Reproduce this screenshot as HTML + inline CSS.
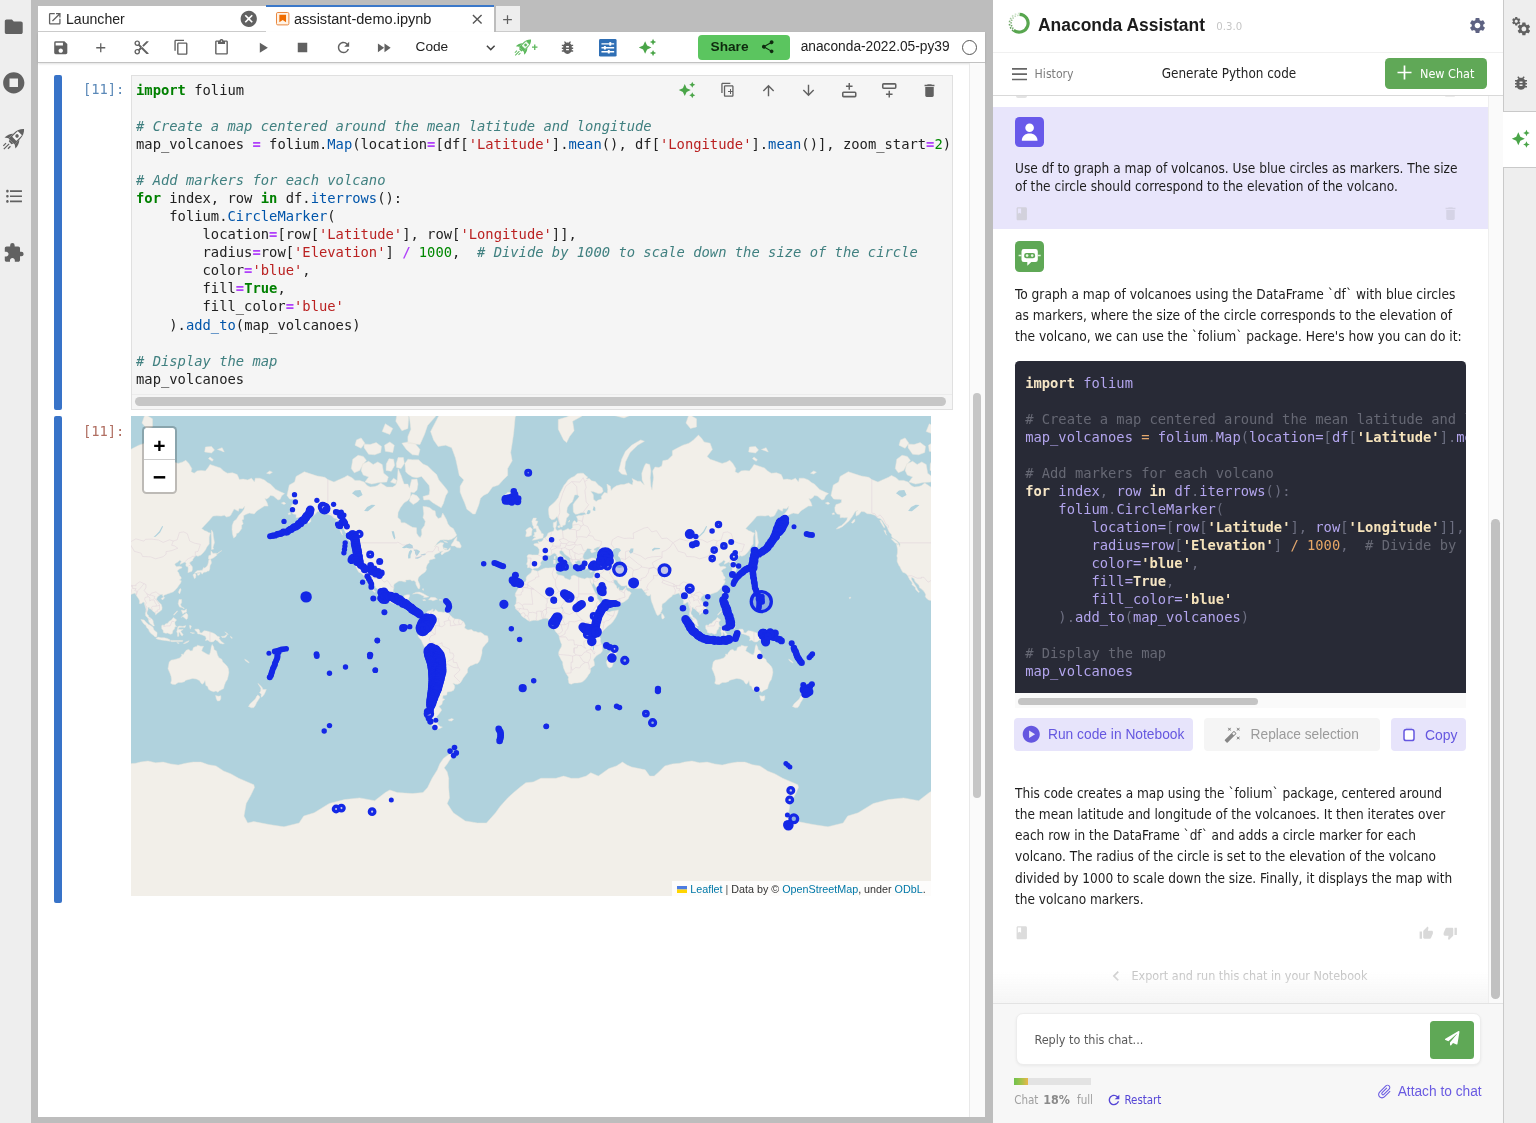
<!DOCTYPE html><html lang="en"><head><meta charset="utf-8"><title>assistant-demo.ipynb - JupyterLab</title><style>*{box-sizing:border-box;margin:0;padding:0}
html,body{width:1536px;height:1123px;overflow:hidden}
body{will-change:transform;transform:translateZ(0);position:relative;background:#bdbdbd;font-family:"Liberation Sans",Arial,sans-serif;color:#222;-webkit-font-smoothing:antialiased}
.ic{position:absolute;display:block;overflow:visible}
.ui{position:absolute;white-space:pre;line-height:18px;font-family:"Liberation Sans",Arial,sans-serif}
.tx{position:absolute;white-space:pre;font-family:"DejaVu Sans Condensed","Liberation Sans",sans-serif}
/* left sidebar */
#lsb{position:absolute;left:0;top:0;width:30.8px;height:1123px;background:#eeeeee}
/* tab bar */
#tabbar{position:absolute;left:31px;top:0;width:962px;height:32px}
#tabbar .ic,#tabbar .tabl{margin-left:-31px}
.tab{position:absolute;top:6px;height:26px;background:#fff;margin-left:-31px;border-bottom:1.2px solid #cdcdcd}
.tab.act{top:5px;height:27.5px;border-top:2px solid #3b78c9;border-bottom:none}
.tab.plus{background:#eee}
.tabl{position:absolute;top:10px;line-height:18px;font-size:14.1px;color:#222;white-space:pre}
/* notebook */
#nb{position:absolute;left:0;top:0;width:0;height:0}
#nb:before{content:"";position:absolute;left:38.3px;top:32px;width:946.7px;height:1085px;background:#fff}
#toolbar{position:absolute;left:38.3px;top:32px;width:946.7px;height:30.8px;background:#fff;border-bottom:1px solid #c2c2c2;box-shadow:0 1px 2px rgba(0,0,0,.12)}
#share{position:absolute;left:698px;top:34.6px;width:92px;height:25px;background:#5bc55f;border-radius:4px}
.collapser{position:absolute;left:54.4px;width:8.1px;background:#3873c8;border-radius:2px}
.prompt{position:absolute;font-family:"DejaVu Sans Mono","Liberation Mono",monospace;font-size:13.78px;line-height:18.1px;white-space:pre}
#editor{position:absolute;left:130.6px;top:74.9px;width:822px;height:334.7px;background:#f5f5f5;border:1px solid #e0e0e0}
.code{position:absolute;font-family:"DejaVu Sans Mono","Liberation Mono",monospace;font-size:13.82px;line-height:18.07px;white-space:pre;color:#212121}
.code i{font-style:italic;color:#408080}
.code b{font-weight:bold;color:#008000}
.code .o{color:#b040fa;font-weight:bold}
.code .s{color:#ba2121}
.code .n{color:#080}
.code .p{color:#0055aa}
.hthumb{position:absolute;background:#c6c6c6;border-radius:5px}
#vtrack{position:absolute;left:969.3px;top:63px;width:15.7px;height:1054px;background:#fafafa;border-left:1px solid #e9e9e9}
#vthumb{position:absolute;left:973.2px;top:392.6px;width:8.2px;height:405.7px;background:#c6c6c6;border-radius:4.1px}
/* map */
#map{position:absolute;left:130.6px;top:416px;width:800.6px;height:480px;background:#b2d1dc;overflow:hidden}
#map svg.world{position:absolute;left:0;top:0}
#zoomctl{position:absolute;left:11.4px;top:10.3px;width:34.8px;height:67.4px;border:2px solid rgba(0,0,0,.22);border-radius:4.5px;background:#fff;background-clip:padding-box}
.zb{height:31.2px;text-align:center;font:bold 21px/35px "Liberation Sans",Arial,sans-serif;color:#000}
.zb.zm{border-top:1px solid #ccc;line-height:35px;font-size:23px}
#attr{position:absolute;right:0;bottom:0;height:15.5px;padding:0 5.5px 0 5px;background:rgba(255,255,255,.8);font-size:10.75px;line-height:16.6px;color:#333;white-space:pre}
#attr .lk{color:#0078a8}
#attr .sep{color:#555}
/* right sidebar */
#rsb{position:absolute;left:1503px;top:0;width:33px;height:1123px;background:#eeeeee;border-left:1px solid #c9c9c9}
#rsbact{position:absolute;left:-1px;top:111.4px;width:34px;height:56.4px;background:#fff;border-top:1px solid #c9c9c9;border-bottom:1px solid #c9c9c9}
/* assistant panel */
#ap{position:absolute;left:993px;top:0;width:510px;height:1123px;background:#fff}
.hr{position:absolute;left:993px;width:510px;height:1px}
#newchat{position:absolute;left:1385.3px;top:58.4px;width:101.7px;height:30.6px;background:#60a857;border-radius:4.5px}
#aptrack{position:absolute;left:1487.7px;top:95.7px;width:15.3px;height:907px;background:#fafafa;border-left:1px solid #eeeeee}
#apthumb{position:absolute;left:1491.3px;top:519.3px;width:8.6px;height:479.6px;background:#c1c1c1;border-radius:4.3px}
#umsg{position:absolute;left:993px;top:106.9px;width:494.7px;height:122.4px;background:#e8e5fb}
.av{position:absolute;width:29.8px;height:29.8px;border-radius:4.5px}
.msg{color:#1d1d1d}
#dblock{position:absolute;left:1014.8px;top:361.1px;width:451.6px;height:331.7px;background:#282a36;border-radius:4.5px 4.5px 0 0;overflow:hidden}
.dcode{position:absolute;left:10.4px;top:12.5px;font-family:"DejaVu Sans Mono","Liberation Mono",monospace;font-size:13.78px;line-height:18.05px;white-space:pre;color:#b3a5ee}
.dcode .dc{color:#666874}
.dcode .ds{color:#f6e3bb;font-weight:bold}
.dcode .dk{color:#f6e6c6;font-weight:bold}
.dcode .dn{color:#e7a766}
.dcode .do{color:#e3a86e}
.dcode .dp{color:#6c6e80}
#dscroll{position:absolute;left:1014.8px;top:692.8px;width:451.6px;height:15.4px;background:#fafafa}
#dscroll div{position:absolute;left:2.9px;top:5px;width:240px;height:7.4px;border-radius:3.7px;background:#c4c4c4}
.btn{position:absolute;top:718.4px;height:32.7px;background:#e7e4fb;border-radius:4px}
.btn.dis{background:#f5f5f5}
#apbottom{position:absolute;left:993px;top:1002.6px;width:510px;height:120.4px;background:#f7f7f7;border-top:1px solid #e3e3e3}
#inputbox{position:absolute;left:1015.6px;top:1013.1px;width:465px;height:52px;background:#fff;border:1px solid #ededed;border-radius:7px;box-shadow:0 1px 3px rgba(0,0,0,.06)}
#send{position:absolute;left:1429.7px;top:1020.6px;width:44.5px;height:38px;background:#5fa856;border-radius:3.5px}
#prog{position:absolute;left:1014.2px;top:1078.2px;width:76.4px;height:6.4px;background:#e3e3e3}
#prog div{width:14.2px;height:100%;background:linear-gradient(90deg,#6fc24c,#a8c24a 55%,#e9b64a)}
#apfade{position:absolute;left:993px;top:972px;width:494.7px;height:30.6px;background:linear-gradient(180deg,rgba(244,244,244,0),rgba(244,244,244,.9))}
</style></head><body><div id="lsb"><svg class="ic" style="left:3.25px;top:16.25px;width:21.50px;height:21.50px;fill:#616161;" viewBox="0 0 24 24"><path d="M10 4H4c-1.1 0-1.99.9-1.99 2L2 18c0 1.1.9 2 2 2h16c1.1 0 2-.9 2-2V8c0-1.1-.9-2-2-2h-8l-2-2z"/></svg><svg class="ic" style="left:1.05px;top:70.25px;width:25.50px;height:25.50px;fill:#616161;" viewBox="0 0 24 24"><path d="M12 2C6.48 2 2 6.48 2 12s4.48 10 10 10 10-4.48 10-10S17.52 2 12 2zm4 14H8V8h8v8z"/></svg><svg class="ic" style="left:0;top:0;width:1px;height:1px" viewBox="0 0 1 1"><g transform="translate(14.00 139.00) rotate(45) scale(1.000)"><path fill="#616161" d="M0-14.200C2.600-12 4.300-8.500 4.300-4V3.500H-4.300V-4C-4.300-8.500-2.600-12 0-14.200Z"/><path fill="#616161" d="M-4.300-3.200C-6.600-1-7.700 2-7.700 5.700L-4.300 3.300ZM4.300-3.200C6.600-1 7.700 2 7.700 5.700L4.300 3.300Z"/><rect x="-3" y="-8.300" width="6" height="8" rx=".6" fill="#f4f4f4"/><circle cx="0" cy="-4.300" r="1.750" fill="#616161"/><path fill="#616161" d="M-2.700 3.500H2.700L1.900 5.400H-1.900Z"/><path stroke="#616161" stroke-width="1.250" fill="none" d="M-2.700 8.600V12.400M0 6.900V14.400M2.600 7.600V11.100"/></g></svg><svg class="ic" style="left:3.75px;top:185.75px;width:20.50px;height:20.50px;fill:#616161;" viewBox="0 0 24 24"><path d="M4 10.5c-.83 0-1.5.67-1.5 1.5s.67 1.5 1.5 1.5 1.5-.67 1.5-1.5-.67-1.5-1.5-1.5zm0-6c-.83 0-1.5.67-1.5 1.5S3.17 7.5 4 7.5 5.5 6.83 5.5 6 4.83 4.5 4 4.5zm0 12c-.83 0-1.5.68-1.5 1.5s.68 1.5 1.5 1.5 1.5-.68 1.5-1.5-.67-1.5-1.5-1.5zM7 19h14v-2H7v2zm0-6h14v-2H7v2zm0-8v2h14V5H7z"/></svg><svg class="ic" style="left:3.25px;top:242.25px;width:21.50px;height:21.50px;fill:#616161;" viewBox="0 0 24 24"><path d="M20.5 11H19V7c0-1.1-.9-2-2-2h-4V3.5a2.5 2.5 0 0 0-5 0V5H4c-1.1 0-1.99.9-1.99 2v3.8H3.5c1.49 0 2.7 1.21 2.7 2.7s-1.21 2.7-2.7 2.7H2V20c0 1.1.9 2 2 2h3.8v-1.5c0-1.49 1.21-2.7 2.7-2.7 1.49 0 2.7 1.21 2.7 2.7V22H17c1.1 0 2-.9 2-2v-4h1.5a2.5 2.5 0 0 0 0-5z"/></svg></div><div id="tabbar"><div class="tab" style="left:38.3px;width:228px"></div><svg class="ic" style="left:46.70px;top:10.90px;width:15.50px;height:15.50px;fill:#616161;" viewBox="0 0 24 24"><path d="M19 19H5V5h7V3H5a2 2 0 0 0-2 2v14a2 2 0 0 0 2 2h14c1.1 0 2-.9 2-2v-7h-2v7zM14 3v2h3.59l-9.83 9.83 1.41 1.41L19 6.41V10h2V3h-7z"/></svg><span class="tabl" style="left:66px">Launcher</span><svg class="ic" style="left:238.75px;top:9.25px;width:19.50px;height:19.50px;fill:#616161;" viewBox="0 0 24 24"><path d="M12 2C6.47 2 2 6.47 2 12s4.47 10 10 10 10-4.47 10-10S17.53 2 12 2zm5 13.59L15.59 17 12 13.41 8.41 17 7 15.59 10.59 12 7 8.41 8.41 7 12 10.59 15.59 7 17 8.41 13.41 12 17 15.59z"/></svg><div class="tab act" style="left:266.3px;width:228.2px"></div><svg class="ic" style="left:276px;top:12.3px;width:13.4px;height:13.4px" viewBox="0 0 22 22"><rect x="0.8" y="0.8" width="20.400" height="20.400" rx="2.200" fill="#fff3e6" stroke="#e8843a" stroke-width="1.600"/><path d="M5.500 4.500h11v12.500l-5.500-4-5.500 4z" fill="#ef6c00"/></svg><span class="tabl" style="left:294px;font-size:14.55px">assistant-demo.ipynb</span><svg class="ic" style="left:468.75px;top:10.75px;width:16.50px;height:16.50px;fill:#555;" viewBox="0 0 24 24"><path d="M19 6.41 17.59 5 12 10.59 6.41 5 5 6.41 10.59 12 5 17.59 6.41 19 12 13.41 17.59 19 19 17.59 13.41 12z"/></svg><div class="tab plus" style="left:495.5px;width:24.5px"></div><svg class="ic" style="left:500.10px;top:11.50px;width:15.00px;height:15.00px;fill:#616161;" viewBox="0 0 24 24"><path d="M19 13h-6v6h-2v-6H5v-2h6V5h2v6h6v2z"/></svg></div><div id="nb"><div id="toolbar"></div><svg class="ic" style="left:51.75px;top:38.75px;width:17.50px;height:17.50px;fill:#616161;" viewBox="0 0 24 24"><path d="M17 3H5a2 2 0 0 0-2 2v14a2 2 0 0 0 2 2h14c1.1 0 2-.9 2-2V7l-4-4zm-5 16c-1.66 0-3-1.34-3-3s1.34-3 3-3 3 1.34 3 3-1.34 3-3 3zm3-10H5V5h10v4z"/></svg><svg class="ic" style="left:92.95px;top:39.75px;width:15.50px;height:15.50px;fill:#616161;" viewBox="0 0 24 24"><path d="M19 13h-6v6h-2v-6H5v-2h6V5h2v6h6v2z"/></svg><svg class="ic" style="left:132.50px;top:39.00px;width:17.00px;height:17.00px;fill:#616161;" viewBox="0 0 24 24"><path d="M9.64 7.64c.23-.5.36-1.05.36-1.64 0-2.21-1.79-4-4-4S2 3.79 2 6s1.79 4 4 4c.59 0 1.14-.13 1.64-.36L10 12l-2.36 2.36C7.14 14.13 6.59 14 6 14c-2.21 0-4 1.79-4 4s1.79 4 4 4 4-1.79 4-4c0-.59-.13-1.14-.36-1.64L12 14l7 7h3v-1L9.64 7.64zM6 8c-1.1 0-2-.89-2-2s.9-2 2-2 2 .89 2 2-.9 2-2 2zm0 12c-1.1 0-2-.89-2-2s.9-2 2-2 2 .89 2 2-.9 2-2 2zm6-7.5c-.28 0-.5-.22-.5-.5s.22-.5.5-.5.5.22.5.5-.22.5-.5.5zM19 3l-6 6 2 2 7-7V3z"/></svg><svg class="ic" style="left:172.75px;top:39.25px;width:16.50px;height:16.50px;fill:#616161;" viewBox="0 0 24 24"><path d="M16 1H4c-1.1 0-2 .9-2 2v14h2V3h12V1zm3 4H8c-1.1 0-2 .9-2 2v14c0 1.1.9 2 2 2h11c1.1 0 2-.9 2-2V7c0-1.1-.9-2-2-2zm0 16H8V7h11v14z"/></svg><svg class="ic" style="left:213.00px;top:38.50px;width:17.00px;height:17.00px;fill:#616161;" viewBox="0 0 24 24"><path d="M19 2h-4.18C14.4.84 13.3 0 12 0c-1.3 0-2.4.84-2.82 2H5c-1.1 0-2 .9-2 2v16c0 1.1.9 2 2 2h14c1.1 0 2-.9 2-2V4c0-1.1-.9-2-2-2zm-7 0c.55 0 1 .45 1 1s-.45 1-1 1-1-.45-1-1 .45-1 1-1zm7 18H5V4h2v3h10V4h2v16z"/></svg><svg class="ic" style="left:254.25px;top:38.75px;width:17.50px;height:17.50px;fill:#616161;" viewBox="0 0 24 24"><path d="M8 5v14l11-7z"/></svg><svg class="ic" style="left:293.30px;top:38.00px;width:19.00px;height:19.00px;fill:#616161;" viewBox="0 0 24 24"><path d="M6 6h12v12H6z"/></svg><svg class="ic" style="left:334.80px;top:38.80px;width:17.00px;height:17.00px;fill:#616161;" viewBox="0 0 24 24"><path d="M17.65 6.35A7.958 7.958 0 0 0 12 4c-4.42 0-7.99 3.58-7.99 8s3.57 8 7.99 8c3.73 0 6.84-2.55 7.73-6h-2.08A5.99 5.99 0 0 1 12 18c-3.31 0-6-2.69-6-6s2.69-6 6-6c1.66 0 3.14.69 4.22 1.78L13 11h7V4l-2.35 2.35z"/></svg><svg class="ic" style="left:375.25px;top:38.75px;width:17.50px;height:17.50px;fill:#616161;" viewBox="0 0 24 24"><path d="m4 18 8.5-6L4 6v12zm9-12v12l8.5-6L13 6z"/></svg><span class="ui" style="left:415.5px;top:38px;font-size:13.7px;color:#222">Code</span><svg class="ic" style="left:481.75px;top:38.75px;width:17.50px;height:17.50px;fill:#444;" viewBox="0 0 24 24"><path d="M16.59 8.59 12 13.17 7.41 8.59 6 10l6 6 6-6z"/></svg><svg class="ic" style="left:0;top:0;width:1px;height:1px" viewBox="0 0 1 1"><g transform="translate(523.20 47.40) rotate(45) scale(0.780)"><path fill="#5cb85c" d="M0-14.200C2.600-12 4.300-8.500 4.300-4V3.500H-4.300V-4C-4.300-8.500-2.600-12 0-14.200Z"/><path fill="#5cb85c" d="M-4.300-3.200C-6.600-1-7.700 2-7.700 5.700L-4.300 3.300ZM4.300-3.200C6.600-1 7.700 2 7.700 5.700L4.300 3.300Z"/><rect x="-3" y="-8.300" width="6" height="8" rx=".6" fill="#eaf7ea"/><circle cx="0" cy="-4.300" r="1.750" fill="#5cb85c"/><path fill="#5cb85c" d="M-2.700 3.500H2.700L1.900 5.400H-1.900Z"/><path stroke="#5cb85c" stroke-width="1.250" fill="none" d="M-2.700 8.600V12.400M0 6.900V14.400M2.600 7.600V11.100"/></g><path fill="#5cb85c" d="M534.10 44.40h1.300v2.100h2.100v1.300h-2.100v2.100h-1.300v-2.100h-2.100v-1.300h2.100z"/></svg><svg class="ic" style="left:558.50px;top:39.00px;width:17.00px;height:17.00px;fill:#616161;" viewBox="0 0 24 24"><path d="M20 8h-2.81a5.985 5.985 0 0 0-1.82-1.96L17 4.41 15.59 3l-2.17 2.17C12.96 5.06 12.49 5 12 5c-.49 0-.96.06-1.41.17L8.41 3 7 4.41l1.62 1.63C7.88 6.55 7.26 7.22 6.81 8H4v2h2.09c-.05.33-.09.66-.09 1v1H4v2h2v1c0 .34.04.67.09 1H4v2h2.81c1.04 1.79 2.97 3 5.19 3s4.15-1.21 5.19-3H20v-2h-2.09c.05-.33.09-.66.09-1v-1h2v-2h-2v-1c0-.34-.04-.67-.09-1H20V8zm-6 8h-4v-2h4v2zm0-4h-4v-2h4v2z"/></svg><svg class="ic" style="left:598.6px;top:39px;width:17.6px;height:17.6px" viewBox="0 0 18 18"><rect width="18" height="18" rx="1.500" fill="#2f6fb5"/><g stroke="#fff" stroke-width="1.500"><path d="M2.500 5h13M2.500 9h13M2.500 13h13"/></g><g fill="#fff"><rect x="10.500" y="3.200" width="2" height="3.600"/><rect x="5" y="7.200" width="2" height="3.600"/><rect x="9" y="11.200" width="2" height="3.600"/></g></svg><svg class="ic" style="left:638.00px;top:37.80px;width:19.00px;height:19.00px;fill:#4aa548;" viewBox="0 0 24 24"><path d="m19 9 1.25-2.75L23 5l-2.75-1.25L19 1l-1.25 2.75L15 5l2.75 1.25L19 9zm-7.5.5L9 4 6.5 9.5 1 12l5.5 2.5L9 20l2.5-5.5L17 12l-5.5-2.5zM19 15l-1.25 2.75L15 19l2.75 1.25L19 23l1.25-2.75L23 19l-2.75-1.25L19 15z"/></svg><div id="share"></div><span class="ui" style="left:710.5px;top:38px;font-size:13.7px;font-weight:bold;color:#0e2a0e">Share</span><svg class="ic" style="left:759.75px;top:39.25px;width:15.50px;height:15.50px;fill:#0e2a0e;" viewBox="0 0 24 24"><path d="M18 16.08c-.76 0-1.44.3-1.96.77L8.91 12.7c.05-.23.09-.46.09-.7s-.04-.47-.09-.7l7.05-4.11c.54.5 1.25.81 2.04.81 1.66 0 3-1.34 3-3s-1.34-3-3-3-3 1.34-3 3c0 .24.04.47.09.7L8.04 9.81C7.5 9.31 6.79 9 6 9c-1.66 0-3 1.34-3 3s1.34 3 3 3c.79 0 1.5-.31 2.04-.81l7.12 4.16c-.05.21-.08.43-.08.65 0 1.61 1.31 2.92 2.92 2.92 1.61 0 2.92-1.31 2.92-2.92s-1.31-2.92-2.92-2.92z"/></svg><span class="ui" style="left:800.7px;top:38px;font-size:13.74px;color:#222">anaconda-2022.05-py39</span><div style="position:absolute;left:962px;top:39.6px;width:15.2px;height:15.2px;border:1.2px solid #555;border-radius:50%"></div><div class="collapser" style="top:74.5px;height:335.5px"></div><span class="prompt" style="left:82.9px;top:80.4px;color:#5b89b8">[11]:</span><div id="editor"></div><pre class="code" id="code1" style="left:136px;top:80.7px"><b>import</b> folium

<i># Create a map centered around the mean latitude and longitude</i>
map_volcanoes <span class="o">=</span> folium.<span class="p">Map</span>(location<span class="o">=</span>[df[<span class="s">'Latitude'</span>].<span class="p">mean</span>(), df[<span class="s">'Longitude'</span>].<span class="p">mean</span>()], zoom_start<span class="o">=</span><span class="n">2</span>)

<i># Add markers for each volcano</i>
<b>for</b> index, row <b>in</b> df.<span class="p">iterrows</span>():
    folium.<span class="p">CircleMarker</span>(
        location<span class="o">=</span>[row[<span class="s">'Latitude'</span>], row[<span class="s">'Longitude'</span>]],
        radius<span class="o">=</span>row[<span class="s">'Elevation'</span>] <span class="o">/</span> <span class="n">1000</span>,  <i># Divide by 1000 to scale down the size of the circle</i>
        color<span class="o">=</span><span class="s">'blue'</span>,
        fill<span class="o">=</span><b>True</b>,
        fill_color<span class="o">=</span><span class="s">'blue'</span>
    ).<span class="p">add_to</span>(map_volcanoes)

<i># Display the map</i>
map_volcanoes</pre><svg class="ic" style="left:678.30px;top:81.00px;width:18.00px;height:18.00px;fill:#4aa548;" viewBox="0 0 24 24"><path d="m19 9 1.25-2.75L23 5l-2.75-1.25L19 1l-1.25 2.75L15 5l2.75 1.25L19 9zm-7.5.5L9 4 6.5 9.5 1 12l5.5 2.5L9 20l2.5-5.5L17 12l-5.5-2.5zM19 15l-1.25 2.75L15 19l2.75 1.25L19 23l1.25-2.75L23 19l-2.75-1.25L19 15z"/></svg><svg class="ic" style="left:719.75px;top:82.25px;width:15.50px;height:15.50px;fill:#616161;" viewBox="0 0 24 24"><path d="M16 1H4c-1.1 0-2 .9-2 2v14h2V3h12V1zm3 4H8c-1.1 0-2 .9-2 2v14c0 1.1.9 2 2 2h11c1.1 0 2-.9 2-2V7c0-1.1-.9-2-2-2zm0 16H8V7h11v14z"/></svg><svg class="ic" style="left:726.6px;top:88.3px;width:7px;height:7px" viewBox="0 0 7 7"><path d="M3 1h1v2h2v1H4v2H3V4H1V3h2z" fill="#616161"/></svg><svg class="ic" style="left:759.50px;top:81.50px;width:17.00px;height:17.00px;fill:#616161;" viewBox="0 0 24 24"><path d="m4 12 1.41 1.41L11 7.83V20h2V7.83l5.58 5.59L20 12l-8-8-8 8z"/></svg><svg class="ic" style="left:799.50px;top:81.50px;width:17.00px;height:17.00px;fill:#616161;" viewBox="0 0 24 24"><path d="m20 12-1.41-1.41L13 16.17V4h-2v12.17l-5.58-5.59L4 12l8 8 8-8z"/></svg><svg class="ic" style="left:840.5px;top:81.5px;width:16.5px;height:16.5px" viewBox="0 0 16 16"><path d="M7.300 1h1.400v2.500h2.500v1.400H8.700v2.500H7.300V4.900H4.800V3.500h2.500z" fill="#616161"/><rect x="1.700" y="10" width="12.600" height="4.200" rx="0.800" fill="none" stroke="#616161" stroke-width="1.500"/></svg><svg class="ic" style="left:880.5px;top:82px;width:16.5px;height:16.5px" viewBox="0 0 16 16"><path d="M7.300 8.600h1.400v2.500h2.500v1.400H8.700V15H7.300v-2.500H4.800v-1.400h2.500z" fill="#616161"/><rect x="1.700" y="1.800" width="12.600" height="4.200" rx="0.800" fill="none" stroke="#616161" stroke-width="1.500"/></svg><svg class="ic" style="left:920.80px;top:81.50px;width:17.00px;height:17.00px;fill:#616161;" viewBox="0 0 24 24"><path d="M6 19c0 1.1.9 2 2 2h8c1.1 0 2-.9 2-2V7H6v12zM19 4h-3.5l-1-1h-5l-1 1H5v2h14V4z"/></svg><div style="position:absolute;left:131.6px;top:393.6px;width:820px;height:1px;background:#ececec"></div><div class="hthumb" style="left:134.8px;top:397.4px;width:811px;height:8.4px"></div><div class="collapser" style="top:416px;height:487px"></div><span class="prompt" style="left:82.9px;top:422.1px;color:#b06e61">[11]:</span><div id="map"><svg class="world" width="800.6" height="480" viewBox="0 0 800.6 480"><defs><filter id="soft" x="-2%%" y="-2%%" width="104%%" height="104%%"><feGaussianBlur stdDeviation=".55"/></filter></defs><rect width="800.6" height="480" fill="#b0d2dd"/><g filter="url(#soft)"><path d="M-142.6 153.6L-143.6 152.5L-145.3 151.4L-147.5 151.7L-147.4 148.9L-148.5 148.3L-147.5 145.6L-147.4 142.3L-148.0 139.9L-146.2 138.4L-142.4 138.9L-139.4 138.9L-136.8 139.1L-135.9 136.8L-135.8 133.5L-137.4 131.1L-140.9 129.3L-141.2 128.0L-138.6 127.3L-136.5 127.5L-137.0 125.2L-135.9 125.9L-133.8 125.7L-131.8 124.0L-131.7 122.4L-129.6 121.4L-128.1 119.7L-127.0 117.2L-125.0 116.2L-123.2 115.7L-121.3 114.9L-120.8 112.6L-121.7 110.5L-121.7 106.7L-119.7 106.1L-118.1 104.7L-118.4 108.0L-118.7 109.9L-119.4 112.1L-119.0 113.4L-117.5 114.7L-115.5 113.9L-113.7 113.6L-112.5 114.9L-109.9 113.9L-106.9 112.6L-105.7 113.6L-104.2 113.4L-102.4 111.5L-102.4 107.2L-101.3 105.0L-100.1 104.7L-98.6 106.7L-97.2 105.3L-97.4 103.0L-98.6 100.4L-96.3 99.5L-93.3 99.5L-91.5 98.9L-88.8 98.3L-90.6 96.5L-94.1 96.8L-97.1 98.0L-99.5 98.3L-101.6 96.1L-101.8 92.4L-101.9 88.5L-100.1 85.8L-97.1 82.3L-95.9 80.5L-97.5 78.7L-100.4 79.0L-101.6 83.0L-102.7 85.8L-105.4 88.1L-107.7 91.7L-108.1 94.9L-108.1 96.5L-105.7 98.6L-106.4 100.1L-108.4 102.1L-109.0 105.3L-109.9 108.9L-112.2 109.4L-112.6 111.0L-114.5 111.0L-114.8 108.9L-116.0 105.8L-117.0 102.4L-117.9 100.4L-118.5 101.0L-120.5 103.3L-123.2 103.8L-125.5 101.8L-126.2 98.0L-126.5 93.3L-125.8 90.8L-123.5 88.8L-121.1 86.8L-119.0 84.4L-116.7 81.6L-115.1 77.2L-112.9 73.0L-111.1 69.4L-109.2 67.3L-106.9 63.9L-103.9 61.7L-100.9 60.4L-97.8 57.7L-94.8 57.2L-91.8 57.2L-88.8 60.0L-87.3 60.9L-88.8 63.1L-85.7 62.6L-83.5 64.8L-79.7 65.6L-76.7 69.0L-72.9 71.8L-71.8 75.3L-73.7 77.2L-76.7 77.6L-81.2 75.7L-84.2 75.3L-81.7 78.7L-81.5 83.3L-78.9 85.4L-76.7 84.0L-73.4 83.0L-73.7 80.5L-70.6 76.4L-67.6 77.2L-67.3 73.4L-68.1 68.1L-64.6 70.2L-63.8 74.5L-61.6 71.8L-58.5 69.8L-54.0 68.6L-51.0 68.6L-46.5 66.9L-42.7 69.0L-41.9 65.2L-43.0 62.6L-37.4 65.2L-34.4 65.2L-32.9 66.9L-30.6 69.0L-32.9 63.9L-33.2 57.2L-30.6 50.0L-29.1 47.4L-25.3 48.5L-24.1 54.9L-24.8 61.7L-24.1 70.2L-23.0 74.1L-22.3 68.1L-21.5 61.7L-22.3 54.9L-20.0 51.0L-16.2 51.5L-13.2 50.0L-12.2 44.8L-7.2 43.7L-2.6 39.3L-2.6 34.7L1.9 32.3L7.9 29.2L14.0 27.2L18.5 23.9L23.5 19.1L26.8 22.6L29.1 25.9L35.1 27.2L37.4 33.5L32.1 40.4L35.1 43.2L38.2 44.3L44.2 46.4L47.2 47.4L51.8 45.9L54.8 44.3L57.8 47.4L60.8 52.5L60.1 55.8L63.1 57.2L66.1 54.9L69.9 54.4L74.4 54.9L77.5 51.0L79.0 48.5L85.0 50.5L89.5 52.0L92.6 54.9L96.3 57.2L101.6 56.8L106.2 58.6L108.4 63.5L112.2 63.1L116.7 63.9L120.5 62.2L123.5 66.1L124.3 62.2L128.8 62.2L133.4 63.9L136.4 66.5L139.4 68.1L144.7 73.4L150.0 76.1L153.5 77.6L150.7 79.8L149.2 83.3L147.0 84.0L142.4 80.1L139.4 79.4L137.9 81.6L135.6 83.0L133.8 82.6L136.1 86.8L137.1 90.1L133.4 90.1L129.6 92.4L125.8 94.9L123.2 98.0L118.3 97.1L115.2 98.3L112.7 99.5L112.7 103.3L111.0 104.1L112.2 108.0L110.7 108.9L110.7 112.6L107.7 116.7L105.6 117.5L105.0 120.2L102.7 122.1L101.6 118.5L101.0 113.4L101.2 109.4L102.8 105.3L105.4 103.3L107.7 99.5L110.4 96.8L113.0 93.3L113.7 90.1L111.5 92.7L108.1 92.4L107.4 95.2L103.1 93.0L100.1 98.6L98.9 100.1L95.6 101.0L93.3 99.2L90.3 100.1L85.8 99.8L82.0 100.1L78.2 104.4L74.4 108.6L70.7 112.6L73.7 114.7L75.5 115.2L77.5 116.5L79.4 117.0L78.2 120.9L78.2 124.5L78.2 128.0L75.9 130.9L74.4 134.0L72.2 136.8L69.9 139.1L66.9 140.3L65.1 139.5L63.4 141.1L61.9 143.2L61.7 144.4L59.3 145.9L58.6 147.1L59.8 148.7L61.3 150.8L61.4 153.6L60.8 155.3L58.9 156.0L56.9 156.6L57.1 154.4L57.2 151.7L56.3 150.4L55.1 150.2L54.8 148.9L55.2 146.9L53.7 146.1L50.3 147.7L49.0 148.3L50.3 145.2L48.7 144.2L46.5 146.3L44.2 147.5L43.8 149.1L45.7 150.8L48.4 150.2L51.0 151.0L50.7 152.1L48.3 153.1L46.2 155.1L47.7 156.8L48.6 159.5L50.1 161.3L50.1 162.9L48.4 163.9L50.3 164.8L49.7 167.0L48.3 168.8L46.8 171.0L45.7 172.6L44.2 174.0L42.4 175.8L39.7 176.8L37.7 177.4L35.1 178.4L32.9 179.2L32.7 180.7L31.8 180.3L31.5 178.6L29.6 178.6L27.1 180.3L25.9 181.9L25.6 183.5L26.8 185.1L28.3 186.7L30.3 188.6L31.1 191.4L30.9 193.7L29.1 195.3L27.3 196.4L26.1 197.6L24.6 198.8L24.3 196.8L22.8 196.0L21.2 194.4L20.0 193.0L18.4 192.6L18.4 191.6L17.0 191.6L17.0 193.7L16.0 196.0L16.0 198.0L17.5 199.4L17.8 201.1L19.3 201.7L20.8 202.9L22.1 204.7L22.3 206.7L23.4 209.9L22.3 210.0L20.8 208.8L19.0 207.6L17.8 205.6L17.5 203.2L16.6 201.7L14.7 199.9L14.4 197.6L14.9 195.3L15.0 193.0L14.3 190.6L13.5 188.3L13.4 186.7L12.2 186.1L10.1 187.8L8.4 187.5L8.7 185.1L7.6 182.7L6.4 181.1L4.9 178.7L4.2 177.1L2.7 177.4L0.4 178.2L-2.6 178.9L-2.9 180.3L-4.9 181.6L-7.2 183.5L-9.7 186.2L-12.8 188.0L-13.1 190.6L-12.8 193.0L-13.5 195.3L-14.3 196.4L-14.7 197.9L-15.9 198.5L-17.0 199.7L-18.5 198.3L-19.3 196.0L-20.3 193.7L-21.2 191.4L-22.0 189.1L-23.0 186.7L-23.8 184.3L-24.1 181.9L-24.2 179.5L-24.4 178.2L-25.0 179.5L-27.0 180.0L-29.5 177.9L-27.9 176.6L-29.8 176.8L-31.0 175.3L-32.4 173.5L-33.6 172.3L-36.6 172.6L-41.0 172.6L-44.2 172.3L-47.5 171.8L-48.3 169.6L-51.0 170.1L-53.3 169.9L-55.5 168.2L-57.0 166.5L-57.8 164.4L-60.1 163.7L-61.6 164.4L-61.3 166.2L-60.4 167.9L-58.5 169.9L-58.2 171.8L-57.0 173.0L-56.1 171.3L-56.1 173.8L-54.8 174.3L-52.5 174.5L-50.2 172.5L-49.0 171.0L-48.9 173.3L-47.2 175.0L-45.4 175.4L-43.7 177.1L-45.7 180.3L-46.8 182.7L-48.7 184.3L-51.0 185.9L-55.1 187.5L-58.5 189.1L-61.6 190.6L-66.1 192.5L-68.4 192.6L-69.1 190.6L-69.6 188.3L-69.9 186.2L-71.4 184.3L-72.9 181.9L-74.7 179.5L-75.5 177.1L-76.7 174.6L-78.2 172.1L-79.7 169.9L-80.8 167.9L-81.5 167.0L-81.4 165.3L-82.3 167.9L-82.4 168.4L-83.8 167.0L-84.7 164.6L-85.3 162.3L-82.7 162.2L-81.5 160.6L-80.9 158.6L-80.0 156.4L-79.7 154.0L-79.4 152.3L-81.2 152.3L-83.0 153.2L-85.0 153.4L-87.3 152.1L-88.0 153.1L-89.5 153.2L-91.3 152.3L-92.7 151.7L-92.8 149.8L-94.1 148.9L-93.6 147.3L-94.5 145.9L-92.5 145.2L-90.3 145.0L-90.1 143.8L-87.3 143.6L-83.5 141.9L-80.9 141.9L-78.9 143.4L-75.9 144.0L-72.9 143.8L-71.2 142.8L-71.4 140.7L-73.7 138.9L-75.9 137.0L-77.4 135.7L-76.2 133.5L-74.9 131.1L-77.4 131.1L-80.8 132.7L-81.2 134.2L-78.9 135.0L-80.9 136.1L-83.2 137.0L-84.8 134.8L-83.3 133.3L-85.7 132.7L-87.6 132.4L-89.2 135.0L-90.7 136.8L-91.8 139.3L-92.2 140.9L-91.5 142.8L-90.3 143.5L-91.8 144.0L-93.3 144.8L-94.5 145.4L-94.8 144.4L-97.1 144.2L-98.1 145.4L-99.6 145.2L-99.8 146.9L-99.0 147.9L-97.8 149.5L-97.8 150.4L-99.3 151.0L-99.3 152.7L-100.4 152.7L-101.3 151.9L-102.1 150.2L-101.9 149.1L-103.4 146.9L-104.8 145.0L-104.6 142.6L-106.1 140.9L-108.4 139.5L-110.7 137.8L-111.7 135.7L-113.4 134.4L-115.5 135.0L-115.4 137.2L-113.5 138.9L-112.2 141.3L-109.9 142.3L-109.9 143.2L-106.9 144.8L-106.1 145.7L-108.4 145.2L-109.0 146.5L-108.3 147.9L-109.8 149.9L-110.4 149.5L-109.9 147.9L-110.5 145.9L-112.2 144.8L-114.5 143.6L-116.0 142.1L-118.2 140.1L-118.7 138.2L-120.8 137.0L-122.8 138.2L-125.0 139.7L-127.3 139.1L-129.3 139.5L-129.3 141.9L-131.1 143.4L-133.0 144.4L-134.6 146.9L-134.1 148.5L-135.2 150.2L-137.1 152.1L-140.7 152.3ZM11.0 7.0L15.5 12.5L21.5 10.9L21.5 2.8L14.0 -1.6ZM74.4 31.0L73.7 35.9L80.5 37.0L83.5 34.1L80.5 30.4ZM86.5 33.5L93.3 35.9L91.1 31.7ZM77.5 42.7L81.2 45.3L82.4 43.7L79.0 41.0ZM135.6 57.2L138.7 54.9L141.4 56.3L138.7 58.1ZM80.5 113.9L82.0 116.5L82.4 120.9L83.5 126.4L82.0 131.3L82.7 133.1L80.5 133.5L80.5 129.1L80.5 123.3L80.2 118.5ZM77.5 143.0L79.3 143.2L82.3 141.9L85.8 139.3L85.5 137.2L82.0 137.4L80.0 134.8L79.9 138.9L77.9 139.5L77.5 141.5ZM79.7 143.2L80.5 146.9L79.0 149.8L78.8 152.7L77.9 155.1L76.4 155.1L75.5 156.0L72.9 156.2L72.2 156.9L71.1 158.2L69.9 156.2L66.9 156.8L63.9 157.3L63.9 156.6L66.1 154.7L68.4 154.4L71.4 154.2L72.6 151.4L73.4 152.1L75.2 151.0L76.7 148.9L77.5 145.9L77.9 143.6ZM63.7 157.5L65.1 158.8L64.5 162.0L63.4 162.5L62.6 160.6L61.9 158.8ZM66.1 157.5L69.1 156.9L68.7 158.6L66.9 159.5ZM49.5 172.5L50.1 173.8L48.6 177.9L47.4 176.3L48.7 173.0ZM30.2 182.4L32.9 181.0L33.6 181.8L31.5 184.0ZM48.1 183.5L50.6 183.5L50.6 186.7L49.5 188.3L50.3 190.6L53.3 192.2L53.0 192.8L51.0 191.4L48.7 191.1L48.1 189.9L47.2 187.5L47.7 185.1ZM50.3 201.4L52.5 199.1L55.5 197.1L56.9 199.1L56.6 202.2L55.4 203.5L53.3 201.7L51.8 200.6ZM50.3 194.0L53.3 194.5L55.5 193.1L55.5 196.0L53.3 196.8L51.8 197.9L51.0 196.0ZM43.0 199.3L46.5 195.6L46.2 194.8L42.7 198.6ZM30.6 209.7L31.4 209.0L33.6 209.4L34.2 208.1L36.7 207.2L38.2 205.2L40.4 204.1L42.4 201.5L43.8 202.5L45.7 204.1L44.2 205.5L43.8 206.7L44.2 209.0L45.7 210.5L43.9 210.8L43.5 213.1L41.9 214.4L41.6 216.5L41.2 217.7L39.2 218.2L36.7 217.0L34.8 217.3L32.4 216.4L32.1 214.3L30.8 212.8ZM9.9 203.5L13.2 204.1L15.0 206.3L17.6 208.5L19.7 209.4L22.0 211.2L22.8 213.5L23.8 214.7L26.1 216.5L25.9 220.8L24.0 220.9L22.8 219.6L20.5 218.0L18.5 215.8L17.5 213.2L15.5 211.2L14.9 209.3L13.2 208.2L11.7 206.4ZM24.9 222.3L27.3 221.1L29.9 221.8L33.3 221.7L36.2 222.5L38.9 223.7L38.8 225.2L35.9 224.7L32.1 224.3L29.1 223.8L26.7 223.2ZM39.7 224.3L41.2 224.4L46.0 224.6L51.8 224.4L51.5 225.5L46.5 225.5L41.2 225.7L39.7 225.4ZM52.5 227.6L54.8 226.0L58.1 224.7L57.1 226.1L54.0 227.5ZM45.7 226.4L48.4 227.0L47.2 227.6ZM46.9 210.8L48.6 210.0L51.8 210.5L54.8 209.6L54.0 211.4L51.0 211.2L48.0 211.4L47.2 213.2L49.2 213.5L52.2 213.4L50.3 214.7L49.8 215.3L50.7 216.8L52.1 218.5L51.2 220.0L50.0 219.0L48.7 216.4L47.8 216.5L47.8 220.3L46.5 220.3L46.5 217.3L45.7 215.8L46.5 212.8ZM58.6 209.3L60.4 210.0L59.3 213.1L58.7 211.2ZM59.3 216.5L63.6 217.0L61.6 217.4ZM63.9 213.2L67.6 213.1L68.7 214.7L68.7 216.5L70.7 217.0L72.9 214.7L75.9 215.0L79.0 215.9L82.7 217.3L85.0 218.8L86.5 220.3L88.8 221.1L88.0 222.3L90.3 225.4L93.3 227.6L91.8 228.0L88.8 227.2L86.5 224.9L84.3 223.7L82.7 225.4L81.2 226.0L79.0 225.8L76.7 224.1L74.4 224.6L75.2 222.6L74.4 220.3L71.4 219.0L68.4 218.0L66.9 218.0L66.1 216.2L65.4 215.3L63.9 214.3ZM90.3 220.5L93.3 220.3L95.6 218.4L96.0 219.6L94.1 221.4L91.1 221.4ZM93.8 215.9L96.3 217.3L97.1 219.0L96.0 217.7ZM99.5 220.3L101.3 221.8L100.9 222.5L99.5 221.1ZM113.7 243.2L116.0 244.5L118.3 246.6L117.5 246.7L114.5 244.8ZM37.0 252.7L37.6 249.4L38.2 246.1L40.4 244.1L42.7 243.8L45.7 242.9L48.7 242.1L50.7 239.7L50.6 238.1L52.5 238.4L53.3 236.8L55.5 234.1L57.8 233.4L59.6 234.9L61.6 234.6L62.3 231.8L63.6 230.9L66.1 230.3L66.4 229.2L69.9 230.3L72.6 230.3L71.4 232.6L70.7 234.9L72.9 236.2L75.9 238.1L78.2 238.9L79.3 236.5L79.9 233.4L80.2 231.0L81.2 228.4L82.7 231.0L83.2 233.8L85.5 234.9L86.5 238.9L88.0 241.7L90.8 243.3L91.8 246.1L93.8 247.7L96.3 250.5L97.4 252.7L97.9 256.4L97.1 260.4L96.3 263.6L94.5 266.3L93.3 269.4L92.6 272.6L90.3 273.8L88.0 274.9L87.0 276.3L85.0 274.9L82.7 275.7L79.7 274.7L77.5 273.2L76.7 270.4L74.9 269.6L74.4 267.2L74.0 264.5L72.9 266.7L71.4 268.2L70.2 267.2L68.4 264.5L65.4 263.1L61.6 262.4L57.8 263.4L54.8 264.3L53.3 265.8L50.3 266.5L47.2 266.5L44.2 268.5L41.2 268.2L39.7 267.2L40.6 264.0L40.1 260.4L38.9 257.0ZM84.6 279.6L87.3 280.2L89.8 279.8L89.8 282.7L88.8 284.7L86.5 285.1L85.3 282.7ZM126.9 267.4L129.3 269.4L131.1 271.5L131.9 273.4L135.3 273.6L134.1 276.5L133.1 278.6L130.8 281.2L130.0 280.4L130.3 278.1L128.5 276.7L129.7 275.1L129.9 272.6L128.8 270.4ZM126.9 279.0L129.1 281.0L127.3 284.1L125.8 286.2L124.3 289.4L122.8 291.6L120.5 291.8L117.5 290.5L119.0 287.9L121.3 285.8L124.3 283.1L125.8 280.0ZM85.8 138.2L87.3 136.8L90.8 134.6L89.5 135.3L86.5 137.8ZM156.0 79.4L158.3 69.0L163.6 66.1L165.1 60.4L173.3 55.8L180.2 58.1L186.3 60.0L193.8 61.3L196.8 63.5L202.9 66.1L207.4 63.9L213.5 61.3L216.5 59.5L221.0 61.7L224.0 64.4L228.6 64.4L233.1 66.1L236.1 69.4L239.1 71.0L243.7 70.6L246.7 69.4L249.7 66.9L255.8 71.0L261.8 71.0L264.8 69.0L266.3 63.9L267.1 52.9L270.1 59.5L271.6 63.9L273.1 68.1L276.9 68.1L278.4 72.2L280.7 63.5L286.0 63.1L287.0 68.1L286.0 74.1L283.0 76.8L279.9 76.1L279.2 81.6L276.9 84.4L273.1 86.8L269.4 91.7L267.1 96.5L266.8 101.5L269.4 103.8L270.1 106.7L273.9 106.7L278.4 109.4L281.5 111.3L285.5 111.8L285.7 117.2L287.5 120.2L289.3 121.6L290.8 118.5L290.5 113.4L293.5 109.4L294.3 105.3L292.0 101.5L292.8 98.0L292.0 90.4L295.5 90.8L298.8 91.7L301.9 94.3L304.1 94.9L304.9 99.5L307.1 102.4L310.2 101.5L311.7 97.1L313.2 99.5L315.5 103.8L317.0 108.0L319.2 110.7L322.3 112.6L323.8 115.4L325.7 119.0L324.1 120.9L320.7 123.3L317.7 124.0L313.2 123.8L309.4 124.0L306.4 126.8L303.4 130.9L304.9 129.3L309.4 126.4L312.7 127.1L311.7 129.6L312.0 131.3L312.7 133.1L314.7 134.0L317.0 134.0L319.2 131.6L319.2 133.8L317.0 135.5L313.9 136.5L310.9 138.9L309.9 137.8L310.5 136.3L312.4 135.0L308.7 135.7L308.7 136.5L305.6 137.8L303.8 138.6L303.1 140.5L304.1 141.9L304.1 142.6L302.2 143.0L298.8 144.0L298.1 144.8L298.1 146.5L296.6 148.1L295.8 149.8L295.1 151.7L295.5 153.6L294.3 155.8L292.0 157.5L290.2 158.8L287.8 160.9L287.0 163.0L287.0 164.8L288.3 167.6L289.0 169.9L288.6 172.5L287.3 172.8L286.3 171.0L284.9 168.2L284.8 166.2L283.0 164.4L281.0 165.0L279.2 163.7L276.9 163.9L274.7 164.1L275.0 165.8L273.1 165.8L270.9 165.1L267.9 165.1L266.0 166.2L263.3 167.9L262.7 169.6L263.0 171.5L262.3 173.8L262.1 177.1L262.9 179.5L264.1 181.5L265.1 183.1L267.1 184.0L269.4 183.7L271.6 183.5L272.8 181.9L273.3 179.5L276.2 178.7L278.4 178.7L278.7 180.3L277.7 181.9L277.2 184.0L276.5 185.1L275.9 187.5L276.9 187.8L279.2 187.8L281.5 187.7L283.7 188.6L284.2 189.2L283.9 192.2L283.6 194.5L283.4 195.4L284.5 196.8L285.7 198.0L287.2 198.6L289.0 197.9L290.5 197.6L292.3 198.6L293.1 199.1L292.2 201.1L291.3 199.7L289.8 198.5L288.6 199.6L289.0 200.6L287.5 200.9L286.4 199.9L284.8 199.6L283.7 199.1L283.4 198.3L281.8 197.3L280.2 196.8L280.4 195.3L278.7 193.4L277.5 192.2L276.2 191.9L273.9 191.1L271.6 190.6L270.4 189.7L268.2 187.5L266.6 187.2L264.8 188.0L262.6 187.7L260.3 186.6L257.6 185.6L255.8 184.5L253.5 183.9L251.2 181.9L250.3 180.5L250.8 178.7L249.7 176.6L248.2 174.6L245.9 172.5L244.6 171.8L244.0 169.6L242.8 168.1L241.4 167.0L239.9 165.3L239.1 162.7L237.6 161.8L236.6 161.4L236.4 163.0L237.6 165.3L239.1 167.4L240.7 169.9L241.9 172.1L242.9 174.1L244.4 175.9L243.7 176.4L242.5 175.4L240.7 173.6L240.2 171.3L238.4 169.9L236.9 168.4L237.3 167.0L236.1 165.3L234.6 163.6L233.6 161.4L232.8 159.8L231.1 157.7L229.3 156.8L227.7 156.2L225.8 152.7L224.8 150.6L224.0 149.5L222.8 146.9L222.1 145.2L222.4 141.9L221.8 139.9L222.5 136.8L222.5 133.1L221.5 128.2L224.0 128.6L224.8 130.7L225.1 128.0L224.0 126.4L221.8 124.5L218.7 122.6L216.8 120.9L216.5 118.5L214.2 115.9L213.0 113.4L211.9 110.7L209.7 108.0L207.4 104.4L205.1 102.4L202.9 102.1L199.9 99.2L196.1 98.0L192.3 97.7L189.3 95.8L186.3 95.5L184.0 98.6L181.0 100.1L181.0 95.8L183.2 94.3L180.2 95.5L177.9 99.5L176.4 101.8L174.2 104.7L171.1 107.5L167.4 110.7L164.3 112.3L161.3 113.1L163.6 110.7L166.6 109.4L169.6 106.7L171.9 103.8L172.4 101.5L169.6 101.8L167.4 101.5L165.1 101.8L165.1 98.6L162.1 98.0L160.1 95.5L159.8 91.7L161.0 88.5L163.6 87.8L166.3 86.5L166.6 83.7L164.3 83.3L161.3 83.3L158.6 83.0ZM223.6 128.2L220.3 127.1L216.2 122.8L218.0 122.8L221.0 125.0L223.1 127.1ZM211.6 119.2L210.1 116.7L208.9 114.4L210.7 114.7L210.9 117.2ZM208.9 111.5L206.7 108.0L204.7 104.4L206.2 104.1L208.2 107.8L210.0 111.3ZM176.4 106.7L178.4 104.1L179.9 103.3L179.8 105.5L177.9 107.2ZM150.4 87.1L153.0 86.1L154.8 87.5L153.0 88.5ZM157.1 97.4L159.1 96.8L159.5 98.3L157.5 98.6ZM299.6 15.5L307.1 1.1L316.2 -14.1L326.8 -21.6L341.9 -27.5L357.0 -36.4L372.1 -29.9L382.7 -16.2L391.8 -10.0L384.2 1.1L382.7 17.0L381.2 27.2L379.7 36.5L381.2 44.8L376.7 52.5L376.7 59.5L372.1 63.9L367.6 69.0L361.5 71.0L357.0 77.2L352.5 79.4L349.5 82.3L347.9 88.5L345.7 94.3L344.2 98.0L341.9 98.0L338.9 95.5L335.9 93.3L333.6 86.8L331.3 81.6L329.1 76.1L329.1 70.2L332.8 63.9L328.3 59.5L326.8 52.5L324.5 42.1L320.7 31.7L314.7 29.2L307.1 30.4L302.6 23.9ZM312.4 87.5L310.2 91.7L306.4 89.5L301.9 86.8L298.1 83.7L292.8 84.0L292.0 80.5L298.1 78.7L298.8 74.1L298.1 69.4L293.5 63.9L290.5 60.4L286.0 61.7L281.5 60.9L276.9 58.1L274.7 55.8L273.9 47.4L276.9 43.2L281.5 43.7L287.5 43.7L292.0 47.9L296.6 50.0L301.1 54.4L305.6 58.6L307.9 63.9L313.2 70.2L316.2 74.1L317.0 76.1L314.7 79.8ZM233.9 66.1L240.7 68.1L248.2 66.5L255.8 66.1L257.3 60.9L252.7 57.2L251.2 48.5L246.7 45.9L242.2 48.5L237.6 45.3L231.6 47.9L230.1 54.4L232.3 59.1L237.6 60.9ZM220.3 52.5L223.3 56.8L228.6 54.4L232.3 47.9L235.4 44.3L232.3 40.4L227.1 39.3L221.8 43.2ZM233.1 31.7L237.6 38.2L243.7 38.8L249.7 36.5L250.5 30.4L245.2 26.6L239.1 28.5L233.1 27.9ZM255.0 54.4L260.3 55.3L263.6 49.5L262.6 43.2L258.0 42.7L255.3 47.9ZM265.6 51.5L270.1 52.5L273.4 47.4L272.4 41.6L267.1 41.6L265.3 47.4ZM254.3 35.3L261.8 36.5L263.3 29.2L258.8 25.9L253.5 29.2ZM259.5 66.1L264.4 67.7L265.9 64.4L262.6 62.2ZM270.9 27.2L275.4 33.5L281.5 38.8L287.5 39.3L289.0 33.5L284.5 27.9L276.9 25.9ZM276.9 27.2L289.0 28.5L293.5 18.4L296.6 9.4L304.1 1.1L313.2 -13.1L316.2 -23.9L304.1 -31.2L289.0 -29.9L273.9 -18.3L270.9 -8.1L278.4 1.1L279.9 13.2L276.9 20.5ZM264.8 5.3L270.9 14.7L276.9 12.5L277.7 1.1L272.4 -10.0L266.3 -4.3ZM251.2 15.5L258.8 18.4L261.8 12.5L254.3 7.8ZM224.0 29.2L230.1 32.3L233.9 27.2L230.1 21.9L225.5 23.9ZM278.4 85.1L282.2 88.5L286.7 85.8L288.7 83.3L286.0 79.8L281.5 77.9L279.2 80.9ZM320.3 130.0L323.8 130.0L326.0 131.6L329.5 132.0L330.3 130.0L329.1 127.7L328.3 125.9L325.6 124.7L326.0 120.7L323.8 122.8L322.3 125.7L320.3 128.6ZM312.4 124.7L316.2 125.9L316.5 126.6L313.9 126.1ZM312.7 131.8L316.2 132.7L315.5 133.5L313.2 132.7ZM281.6 178.1L284.8 176.4L288.3 176.1L292.0 177.4L295.5 179.5L297.8 180.8L295.8 181.3L292.5 181.4L293.2 180.2L291.3 179.5L289.0 178.2L286.0 177.4L283.7 177.7ZM297.5 183.7L299.9 181.3L304.1 181.5L306.5 183.2L304.1 184.0L301.9 184.8L300.3 184.0ZM291.6 183.9L293.5 183.5L294.8 184.3L292.8 184.7ZM308.4 183.5L310.6 183.7L310.5 184.3L308.4 184.3ZM291.6 172.8L292.5 172.8L292.5 174.3L291.7 174.1ZM293.1 199.1L293.8 199.9L295.1 197.7L295.8 195.9L296.9 195.1L299.6 194.5L301.1 193.4L302.2 193.1L301.6 195.3L301.9 196.0L304.1 194.5L304.4 193.4L306.4 195.0L307.1 195.9L310.2 195.9L312.4 196.5L315.5 195.7L316.5 195.7L317.7 197.6L319.2 199.1L321.5 201.4L323.8 202.9L326.8 203.1L329.1 203.5L331.3 205.0L332.8 206.0L334.3 209.3L333.6 212.0L336.9 214.0L340.4 213.5L342.7 215.3L344.9 215.6L347.2 216.4L349.5 216.2L351.7 217.6L353.7 219.3L356.6 219.9L357.3 222.9L357.0 225.7L354.7 228.0L353.2 230.0L351.7 231.8L351.0 234.1L351.0 237.3L350.2 240.0L349.2 243.7L347.9 246.1L346.4 247.6L344.2 247.7L341.9 248.9L339.6 249.7L337.4 251.5L336.5 253.6L336.5 256.6L334.3 259.2L332.1 262.2L330.6 264.9L329.1 267.1L326.9 268.3L324.5 268.2L321.8 267.1L323.5 269.4L323.8 271.3L322.7 274.2L320.0 275.5L316.2 275.9L315.8 279.0L312.0 279.6L311.7 282.5L313.8 283.3L311.7 285.1L310.9 288.3L307.9 290.5L310.2 293.1L310.5 294.4L307.9 297.9L305.6 300.7L306.5 305.0L304.9 305.3L306.7 306.0L306.4 308.1L309.4 310.6L311.4 311.1L309.4 312.2L306.4 313.3L304.1 312.7L301.1 310.1L298.1 306.3L296.6 303.1L295.8 298.3L295.7 293.8L297.3 290.5L298.8 287.2L299.6 283.1L298.1 281.7L298.4 278.1L298.8 274.2L299.3 272.3L300.2 269.4L301.6 265.8L301.9 261.3L302.0 257.8L302.8 254.4L303.4 251.0L303.5 247.7L303.8 244.5L303.7 240.5L301.9 238.5L298.8 237.0L296.3 235.4L294.6 233.4L294.3 231.8L293.1 230.3L291.7 227.5L290.5 224.6L289.3 222.9L287.5 221.1L287.0 218.8L288.4 217.3L289.0 215.8L287.7 215.3L288.3 213.5L288.9 212.0L289.0 210.6L290.5 210.0L290.8 209.3L291.4 208.1L292.8 207.9L293.2 206.1L292.8 203.7L292.9 201.7L292.2 201.1ZM317.3 303.8L320.7 302.6L322.6 303.3L320.7 305.0L318.0 304.8ZM316.4 195.7L317.7 195.6L317.7 196.7L316.4 196.7ZM401.0 154.0L401.9 153.8L405.4 154.9L406.9 155.3L409.9 153.8L412.2 152.7L414.4 151.9L417.5 152.1L420.5 151.7L423.5 151.4L425.3 151.2L426.5 151.7L425.9 154.6L425.0 156.9L426.2 157.9L427.3 158.9L429.5 159.3L432.9 160.2L433.6 162.0L436.3 162.9L438.6 163.9L440.1 162.7L440.1 160.4L442.4 159.3L444.7 159.8L447.7 161.4L450.7 162.2L453.7 162.9L456.0 161.8L458.3 162.2L459.0 162.5L459.2 164.4L459.0 164.6L459.3 166.2L460.5 168.2L461.3 170.4L462.8 173.8L463.8 176.3L465.5 177.9L466.1 179.9L466.3 182.7L468.1 184.3L469.1 187.5L470.3 189.1L472.2 189.9L474.1 192.2L475.2 193.0L475.3 194.4L476.4 196.0L478.7 195.9L480.9 195.1L483.9 194.8L487.3 193.9L487.0 196.2L486.2 198.3L484.7 201.4L483.2 203.7L481.7 206.0L479.4 208.2L477.1 209.7L474.9 212.0L473.4 213.5L471.9 215.0L470.6 216.5L469.6 218.8L468.7 221.1L469.6 222.6L469.3 224.9L470.0 227.2L471.1 228.7L471.3 231.8L471.4 234.9L469.6 237.3L467.3 238.5L465.5 239.7L463.5 242.1L462.5 243.7L463.2 246.1L463.5 249.4L461.3 251.0L459.5 252.4L459.6 254.4L459.0 257.0L457.5 258.7L456.0 261.3L453.7 264.0L451.5 265.8L449.2 266.5L446.2 266.9L443.1 267.1L440.1 268.2L437.9 267.2L437.6 264.9L437.1 263.1L437.6 261.3L435.9 258.7L434.8 257.1L433.6 254.4L432.6 251.9L431.8 248.6L431.7 246.1L430.1 243.7L428.8 240.9L427.7 238.9L427.7 236.2L428.8 233.4L430.3 231.0L430.8 228.7L429.8 226.4L428.8 223.4L428.3 221.1L428.0 219.6L426.5 217.7L424.7 215.8L423.5 213.5L424.0 211.2L424.4 209.0L424.7 207.2L423.5 205.6L422.7 205.0L420.5 205.3L419.0 205.5L417.9 204.0L416.7 202.5L414.4 202.3L412.2 202.6L409.9 203.4L406.9 204.6L404.6 204.3L402.3 204.3L398.6 205.3L396.3 204.1L394.0 202.2L392.5 201.4L390.6 199.9L389.8 197.9L388.0 196.0L387.2 195.0L384.7 193.1L384.5 191.4L383.6 189.5L385.0 187.5L385.3 184.3L385.4 181.9L384.2 179.5L384.4 177.4L385.7 175.1L387.2 172.6L388.0 170.8L390.0 168.4L392.5 167.0L394.8 165.3L395.2 163.6L395.1 161.8L396.3 159.7L398.6 157.9L400.1 156.4ZM484.4 230.3L486.1 235.7L485.2 238.1L483.9 241.3L482.4 246.9L480.9 251.0L478.2 251.9L476.4 250.2L475.3 246.1L476.8 242.9L476.4 238.9L478.7 236.5L480.9 234.9L482.4 232.6ZM401.4 153.6L400.4 152.5L398.7 151.4L396.5 151.7L396.6 148.9L395.5 148.3L396.5 145.6L396.6 142.3L396.0 139.9L397.8 138.4L401.6 138.9L404.6 138.9L407.2 139.1L408.1 136.8L408.2 133.5L406.6 131.1L403.1 129.3L402.8 128.0L405.4 127.3L407.5 127.5L407.0 125.2L408.1 125.9L410.2 125.7L412.2 124.0L412.3 122.4L414.4 121.4L415.9 119.7L417.0 117.2L419.0 116.2L420.8 115.7L422.7 114.9L423.2 112.6L422.3 110.5L422.3 106.7L424.3 106.1L425.9 104.7L425.6 108.0L425.3 109.9L424.6 112.1L425.0 113.4L426.5 114.7L428.5 113.9L430.3 113.6L431.5 114.9L434.1 113.9L437.1 112.6L438.3 113.6L439.8 113.4L441.6 111.5L441.6 107.2L442.7 105.0L443.9 104.7L445.4 106.7L446.8 105.3L446.6 103.0L445.4 100.4L447.7 99.5L450.7 99.5L452.5 98.9L455.2 98.3L453.4 96.5L449.9 96.8L446.9 98.0L444.5 98.3L442.4 96.1L442.2 92.4L442.1 88.5L443.9 85.8L446.9 82.3L448.1 80.5L446.5 78.7L443.6 79.0L442.4 83.0L441.3 85.8L438.6 88.1L436.3 91.7L435.9 94.9L435.9 96.5L438.3 98.6L437.6 100.1L435.6 102.1L435.0 105.3L434.1 108.9L431.8 109.4L431.4 111.0L429.5 111.0L429.2 108.9L428.0 105.8L427.0 102.4L426.1 100.4L425.5 101.0L423.5 103.3L420.8 103.8L418.5 101.8L417.8 98.0L417.5 93.3L418.2 90.8L420.5 88.8L422.9 86.8L425.0 84.4L427.3 81.6L428.9 77.2L431.1 73.0L432.9 69.4L434.8 67.3L437.1 63.9L440.1 61.7L443.1 60.4L446.2 57.7L449.2 57.2L452.2 57.2L455.2 60.0L456.7 60.9L455.2 63.1L458.3 62.6L460.5 64.8L464.3 65.6L467.3 69.0L471.1 71.8L472.2 75.3L470.3 77.2L467.3 77.6L462.8 75.7L459.8 75.3L462.3 78.7L462.5 83.3L465.1 85.4L467.3 84.0L470.6 83.0L470.3 80.5L473.4 76.4L476.4 77.2L476.7 73.4L475.9 68.1L479.4 70.2L480.2 74.5L482.4 71.8L485.5 69.8L490.0 68.6L493.0 68.6L497.5 66.9L501.3 69.0L502.1 65.2L501.0 62.6L506.6 65.2L509.6 65.2L511.1 66.9L513.4 69.0L511.1 63.9L510.8 57.2L513.4 50.0L514.9 47.4L518.7 48.5L519.9 54.9L519.2 61.7L519.9 70.2L521.0 74.1L521.7 68.1L522.5 61.7L521.7 54.9L524.0 51.0L527.8 51.5L530.8 50.0L531.8 44.8L536.8 43.7L541.4 39.3L541.4 34.7L545.9 32.3L551.9 29.2L558.0 27.2L562.5 23.9L567.5 19.1L570.8 22.6L573.1 25.9L579.1 27.2L581.4 33.5L576.1 40.4L579.1 43.2L582.2 44.3L588.2 46.4L591.2 47.4L595.8 45.9L598.8 44.3L601.8 47.4L604.8 52.5L604.1 55.8L607.1 57.2L610.1 54.9L613.9 54.4L618.4 54.9L621.5 51.0L623.0 48.5L629.0 50.5L633.5 52.0L636.6 54.9L640.3 57.2L645.6 56.8L650.2 58.6L652.4 63.5L656.2 63.1L660.7 63.9L664.5 62.2L667.5 66.1L668.3 62.2L672.8 62.2L677.4 63.9L680.4 66.5L683.4 68.1L688.7 73.4L694.0 76.1L697.5 77.6L694.7 79.8L693.2 83.3L691.0 84.0L686.4 80.1L683.4 79.4L681.9 81.6L679.6 83.0L677.8 82.6L680.1 86.8L681.1 90.1L677.4 90.1L673.6 92.4L669.8 94.9L667.2 98.0L662.3 97.1L659.2 98.3L656.7 99.5L656.7 103.3L655.0 104.1L656.2 108.0L654.7 108.9L654.7 112.6L651.7 116.7L649.6 117.5L649.0 120.2L646.7 122.1L645.6 118.5L645.0 113.4L645.2 109.4L646.8 105.3L649.4 103.3L651.7 99.5L654.4 96.8L657.0 93.3L657.7 90.1L655.5 92.7L652.1 92.4L651.4 95.2L647.1 93.0L644.1 98.6L642.9 100.1L639.6 101.0L637.3 99.2L634.3 100.1L629.8 99.8L626.0 100.1L622.2 104.4L618.4 108.6L614.7 112.6L617.7 114.7L619.5 115.2L621.5 116.5L623.4 117.0L622.2 120.9L622.2 124.5L622.2 128.0L619.9 130.9L618.4 134.0L616.2 136.8L613.9 139.1L610.9 140.3L609.1 139.5L607.4 141.1L605.9 143.2L605.7 144.4L603.3 145.9L602.6 147.1L603.8 148.7L605.3 150.8L605.4 153.6L604.8 155.3L602.9 156.0L600.9 156.6L601.1 154.4L601.2 151.7L600.3 150.4L599.1 150.2L598.8 148.9L599.2 146.9L597.7 146.1L594.3 147.7L593.0 148.3L594.3 145.2L592.7 144.2L590.5 146.3L588.2 147.5L587.8 149.1L589.7 150.8L592.4 150.2L595.0 151.0L594.7 152.1L592.3 153.1L590.2 155.1L591.7 156.8L592.6 159.5L594.1 161.3L594.1 162.9L592.4 163.9L594.3 164.8L593.7 167.0L592.3 168.8L590.8 171.0L589.7 172.6L588.2 174.0L586.4 175.8L583.7 176.8L581.7 177.4L579.1 178.4L576.9 179.2L576.7 180.7L575.8 180.3L575.5 178.6L573.6 178.6L571.1 180.3L569.9 181.9L569.6 183.5L570.8 185.1L572.3 186.7L574.3 188.6L575.1 191.4L574.9 193.7L573.1 195.3L571.3 196.4L570.1 197.6L568.6 198.8L568.3 196.8L566.8 196.0L565.2 194.4L564.0 193.0L562.4 192.6L562.4 191.6L561.0 191.6L561.0 193.7L560.0 196.0L560.0 198.0L561.5 199.4L561.8 201.1L563.3 201.7L564.8 202.9L566.1 204.7L566.3 206.7L567.4 209.9L566.3 210.0L564.8 208.8L563.0 207.6L561.8 205.6L561.5 203.2L560.6 201.7L558.7 199.9L558.4 197.6L558.9 195.3L559.0 193.0L558.3 190.6L557.5 188.3L557.4 186.7L556.2 186.1L554.1 187.8L552.4 187.5L552.7 185.1L551.6 182.7L550.4 181.1L548.9 178.7L548.2 177.1L546.7 177.4L544.4 178.2L541.4 178.9L541.1 180.3L539.1 181.6L536.8 183.5L534.3 186.2L531.2 188.0L530.9 190.6L531.2 193.0L530.5 195.3L529.7 196.4L529.3 197.9L528.1 198.5L527.0 199.7L525.5 198.3L524.7 196.0L523.7 193.7L522.8 191.4L522.0 189.1L521.0 186.7L520.2 184.3L519.9 181.9L519.8 179.5L519.6 178.2L519.0 179.5L517.0 180.0L514.5 177.9L516.1 176.6L514.2 176.8L513.0 175.3L511.6 173.5L510.4 172.3L507.4 172.6L503.0 172.6L499.8 172.3L496.5 171.8L495.7 169.6L493.0 170.1L490.7 169.9L488.5 168.2L487.0 166.5L486.2 164.4L483.9 163.7L482.4 164.4L482.7 166.2L483.6 167.9L485.5 169.9L485.8 171.8L487.0 173.0L487.9 171.3L487.9 173.8L489.2 174.3L491.5 174.5L493.8 172.5L495.0 171.0L495.1 173.3L496.8 175.0L498.6 175.4L500.3 177.1L498.3 180.3L497.2 182.7L495.3 184.3L493.0 185.9L488.9 187.5L485.5 189.1L482.4 190.6L477.9 192.5L475.6 192.6L474.9 190.6L474.4 188.3L474.1 186.2L472.6 184.3L471.1 181.9L469.3 179.5L468.5 177.1L467.3 174.6L465.8 172.1L464.3 169.9L463.2 167.9L462.5 167.0L462.6 165.3L461.7 167.9L461.6 168.4L460.2 167.0L459.3 164.6L458.7 162.3L461.3 162.2L462.5 160.6L463.1 158.6L464.0 156.4L464.3 154.0L464.6 152.3L462.8 152.3L461.0 153.2L459.0 153.4L456.7 152.1L456.0 153.1L454.5 153.2L452.7 152.3L451.3 151.7L451.2 149.8L449.9 148.9L450.4 147.3L449.5 145.9L451.5 145.2L453.7 145.0L453.9 143.8L456.7 143.6L460.5 141.9L463.1 141.9L465.1 143.4L468.1 144.0L471.1 143.8L472.8 142.8L472.6 140.7L470.3 138.9L468.1 137.0L466.6 135.7L467.8 133.5L469.1 131.1L466.6 131.1L463.2 132.7L462.8 134.2L465.1 135.0L463.1 136.1L460.8 137.0L459.2 134.8L460.7 133.3L458.3 132.7L456.4 132.4L454.8 135.0L453.3 136.8L452.2 139.3L451.8 140.9L452.5 142.8L453.7 143.5L452.2 144.0L450.7 144.8L449.5 145.4L449.2 144.4L446.9 144.2L445.9 145.4L444.4 145.2L444.2 146.9L445.0 147.9L446.2 149.5L446.2 150.4L444.7 151.0L444.7 152.7L443.6 152.7L442.7 151.9L441.9 150.2L442.1 149.1L440.6 146.9L439.2 145.0L439.4 142.6L437.9 140.9L435.6 139.5L433.3 137.8L432.3 135.7L430.6 134.4L428.5 135.0L428.6 137.2L430.5 138.9L431.8 141.3L434.1 142.3L434.1 143.2L437.1 144.8L437.9 145.7L435.6 145.2L435.0 146.5L435.7 147.9L434.2 149.9L433.6 149.5L434.1 147.9L433.5 145.9L431.8 144.8L429.5 143.6L428.0 142.1L425.8 140.1L425.3 138.2L423.2 137.0L421.2 138.2L419.0 139.7L416.7 139.1L414.7 139.5L414.7 141.9L412.9 143.4L411.0 144.4L409.4 146.9L409.9 148.5L408.8 150.2L406.9 152.1L403.3 152.3ZM401.3 124.3L404.6 123.8L408.4 122.8L411.9 121.9L412.5 118.0L410.4 117.2L409.9 115.4L408.1 113.1L406.9 109.9L405.4 109.4L406.9 105.3L404.6 104.7L405.4 102.1L402.3 102.1L400.8 105.3L401.6 108.9L402.6 110.7L402.5 112.6L405.1 112.6L405.4 115.9L403.1 116.5L403.6 119.0L402.0 120.2L405.1 121.2L403.1 122.1ZM394.8 120.7L397.8 120.4L400.5 119.2L400.8 115.9L401.3 113.1L399.3 111.3L397.4 112.1L394.8 114.2L395.5 116.7L394.8 119.2ZM373.2 79.8L376.7 76.4L382.7 76.8L387.7 77.2L389.3 81.6L387.2 84.4L381.9 87.1L377.4 85.8L375.9 84.0L376.7 81.6ZM427.3 13.2L432.6 23.9L435.6 26.6L438.6 20.5L443.1 14.7L441.6 5.3L450.7 0.2L444.7 -3.4L435.6 1.1L427.3 3.6ZM487.7 54.9L490.7 58.1L496.0 59.1L493.8 52.5L494.5 45.9L499.1 36.5L506.6 29.2L513.4 25.3L509.6 23.9L500.6 29.2L494.5 35.3L490.7 43.2ZM482.4 -0.7L493.0 1.9L503.6 -2.5L500.6 -11.0L485.5 -8.1ZM555.0 7.0L559.5 12.5L565.5 10.9L565.5 2.8L558.0 -1.6ZM618.4 31.0L617.7 35.9L624.5 37.0L627.5 34.1L624.5 30.4ZM630.5 33.5L637.3 35.9L635.1 31.7ZM621.5 42.7L625.2 45.3L626.4 43.7L623.0 41.0ZM679.6 57.2L682.7 54.9L685.4 56.3L682.7 58.1ZM624.5 113.9L626.0 116.5L626.4 120.9L627.5 126.4L626.0 131.3L626.7 133.1L624.5 133.5L624.5 129.1L624.5 123.3L624.2 118.5ZM621.5 143.0L623.3 143.2L626.3 141.9L629.8 139.3L629.5 137.2L626.0 137.4L624.0 134.8L623.9 138.9L621.9 139.5L621.5 141.5ZM623.7 143.2L624.5 146.9L623.0 149.8L622.8 152.7L621.9 155.1L620.4 155.1L619.5 156.0L616.9 156.2L616.2 156.9L615.1 158.2L613.9 156.2L610.9 156.8L607.9 157.3L607.9 156.6L610.1 154.7L612.4 154.4L615.4 154.2L616.6 151.4L617.4 152.1L619.2 151.0L620.7 148.9L621.5 145.9L621.9 143.6ZM607.7 157.5L609.1 158.8L608.5 162.0L607.4 162.5L606.6 160.6L605.9 158.8ZM610.1 157.5L613.1 156.9L612.7 158.6L610.9 159.5ZM593.5 172.5L594.1 173.8L592.6 177.9L591.4 176.3L592.7 173.0ZM574.2 182.4L576.9 181.0L577.6 181.8L575.5 184.0ZM592.1 183.5L594.6 183.5L594.6 186.7L593.5 188.3L594.3 190.6L597.3 192.2L597.0 192.8L595.0 191.4L592.7 191.1L592.1 189.9L591.2 187.5L591.7 185.1ZM594.3 201.4L596.5 199.1L599.5 197.1L600.9 199.1L600.6 202.2L599.4 203.5L597.3 201.7L595.8 200.6ZM594.3 194.0L597.3 194.5L599.5 193.1L599.5 196.0L597.3 196.8L595.8 197.9L595.0 196.0ZM587.0 199.3L590.5 195.6L590.2 194.8L586.7 198.6ZM574.6 209.7L575.4 209.0L577.6 209.4L578.2 208.1L580.7 207.2L582.2 205.2L584.4 204.1L586.4 201.5L587.8 202.5L589.7 204.1L588.2 205.5L587.8 206.7L588.2 209.0L589.7 210.5L587.9 210.8L587.5 213.1L585.9 214.4L585.6 216.5L585.2 217.7L583.2 218.2L580.7 217.0L578.8 217.3L576.4 216.4L576.1 214.3L574.8 212.8ZM553.9 203.5L557.2 204.1L559.0 206.3L561.6 208.5L563.7 209.4L566.0 211.2L566.8 213.5L567.8 214.7L570.1 216.5L569.9 220.8L568.0 220.9L566.8 219.6L564.5 218.0L562.5 215.8L561.5 213.2L559.5 211.2L558.9 209.3L557.2 208.2L555.7 206.4ZM568.9 222.3L571.3 221.1L573.9 221.8L577.3 221.7L580.2 222.5L582.9 223.7L582.8 225.2L579.9 224.7L576.1 224.3L573.1 223.8L570.7 223.2ZM583.7 224.3L585.2 224.4L590.0 224.6L595.8 224.4L595.5 225.5L590.5 225.5L585.2 225.7L583.7 225.4ZM596.5 227.6L598.8 226.0L602.1 224.7L601.1 226.1L598.0 227.5ZM589.7 226.4L592.4 227.0L591.2 227.6ZM590.9 210.8L592.6 210.0L595.8 210.5L598.8 209.6L598.0 211.4L595.0 211.2L592.0 211.4L591.2 213.2L593.2 213.5L596.2 213.4L594.3 214.7L593.8 215.3L594.7 216.8L596.1 218.5L595.2 220.0L594.0 219.0L592.7 216.4L591.8 216.5L591.8 220.3L590.5 220.3L590.5 217.3L589.7 215.8L590.5 212.8ZM602.6 209.3L604.4 210.0L603.3 213.1L602.7 211.2ZM603.3 216.5L607.6 217.0L605.6 217.4ZM607.9 213.2L611.6 213.1L612.7 214.7L612.7 216.5L614.7 217.0L616.9 214.7L619.9 215.0L623.0 215.9L626.7 217.3L629.0 218.8L630.5 220.3L632.8 221.1L632.0 222.3L634.3 225.4L637.3 227.6L635.8 228.0L632.8 227.2L630.5 224.9L628.3 223.7L626.7 225.4L625.2 226.0L623.0 225.8L620.7 224.1L618.4 224.6L619.2 222.6L618.4 220.3L615.4 219.0L612.4 218.0L610.9 218.0L610.1 216.2L609.4 215.3L607.9 214.3ZM634.3 220.5L637.3 220.3L639.6 218.4L640.0 219.6L638.1 221.4L635.1 221.4ZM637.8 215.9L640.3 217.3L641.1 219.0L640.0 217.7ZM643.5 220.3L645.3 221.8L644.9 222.5L643.5 221.1ZM657.7 243.2L660.0 244.5L662.3 246.6L661.5 246.7L658.5 244.8ZM581.0 252.7L581.6 249.4L582.2 246.1L584.4 244.1L586.7 243.8L589.7 242.9L592.7 242.1L594.7 239.7L594.6 238.1L596.5 238.4L597.3 236.8L599.5 234.1L601.8 233.4L603.6 234.9L605.6 234.6L606.3 231.8L607.6 230.9L610.1 230.3L610.4 229.2L613.9 230.3L616.6 230.3L615.4 232.6L614.7 234.9L616.9 236.2L619.9 238.1L622.2 238.9L623.3 236.5L623.9 233.4L624.2 231.0L625.2 228.4L626.7 231.0L627.2 233.8L629.5 234.9L630.5 238.9L632.0 241.7L634.8 243.3L635.8 246.1L637.8 247.7L640.3 250.5L641.4 252.7L641.9 256.4L641.1 260.4L640.3 263.6L638.5 266.3L637.3 269.4L636.6 272.6L634.3 273.8L632.0 274.9L631.0 276.3L629.0 274.9L626.7 275.7L623.7 274.7L621.5 273.2L620.7 270.4L618.9 269.6L618.4 267.2L618.0 264.5L616.9 266.7L615.4 268.2L614.2 267.2L612.4 264.5L609.4 263.1L605.6 262.4L601.8 263.4L598.8 264.3L597.3 265.8L594.3 266.5L591.2 266.5L588.2 268.5L585.2 268.2L583.7 267.2L584.6 264.0L584.1 260.4L582.9 257.0ZM628.6 279.6L631.3 280.2L633.8 279.8L633.8 282.7L632.8 284.7L630.5 285.1L629.3 282.7ZM670.9 267.4L673.3 269.4L675.1 271.5L675.9 273.4L679.3 273.6L678.1 276.5L677.1 278.6L674.8 281.2L674.0 280.4L674.3 278.1L672.5 276.7L673.7 275.1L673.9 272.6L672.8 270.4ZM670.9 279.0L673.1 281.0L671.3 284.1L669.8 286.2L668.3 289.4L666.8 291.6L664.5 291.8L661.5 290.5L663.0 287.9L665.3 285.8L668.3 283.1L669.8 280.0ZM530.8 197.3L532.6 199.1L533.5 201.4L532.3 202.8L531.1 202.9L530.5 200.6ZM428.8 149.8L433.3 149.5L432.7 152.3L429.5 151.2ZM422.4 144.0L424.4 144.0L424.4 147.5L422.7 147.9ZM423.0 140.7L424.3 140.1L424.1 143.0L423.2 142.8ZM445.6 154.6L449.5 154.9L449.2 155.5L445.6 155.1ZM458.7 155.5L462.0 154.4L461.1 155.7L459.3 156.2ZM426.8 110.2L428.8 109.4L428.8 111.5L427.0 111.5ZM437.4 106.1L438.6 104.1L438.3 105.8ZM629.8 138.2L631.3 136.8L634.8 134.6L633.5 135.3L630.5 137.8ZM174.2 181.5L175.4 181.0L175.8 181.9L174.6 182.7ZM700.0 79.4L702.3 69.0L707.6 66.1L709.1 60.4L717.3 55.8L724.2 58.1L730.3 60.0L737.8 61.3L740.8 63.5L746.9 66.1L751.4 63.9L757.5 61.3L760.5 59.5L765.0 61.7L768.0 64.4L772.6 64.4L777.1 66.1L780.1 69.4L783.1 71.0L787.7 70.6L790.7 69.4L793.7 66.9L799.8 71.0L805.8 71.0L808.8 69.0L810.3 63.9L811.1 52.9L814.1 59.5L815.6 63.9L817.1 68.1L820.9 68.1L822.4 72.2L824.7 63.5L830.0 63.1L831.0 68.1L830.0 74.1L827.0 76.8L823.9 76.1L823.2 81.6L820.9 84.4L817.1 86.8L813.4 91.7L811.1 96.5L810.8 101.5L813.4 103.8L814.1 106.7L817.9 106.7L822.4 109.4L825.5 111.3L829.5 111.8L829.7 117.2L831.5 120.2L833.3 121.6L834.8 118.5L834.5 113.4L837.5 109.4L838.3 105.3L836.0 101.5L836.8 98.0L836.0 90.4L839.5 90.8L842.8 91.7L845.9 94.3L848.1 94.9L848.9 99.5L851.1 102.4L854.2 101.5L855.7 97.1L857.2 99.5L859.5 103.8L861.0 108.0L863.2 110.7L866.3 112.6L867.8 115.4L869.7 119.0L868.1 120.9L864.7 123.3L861.7 124.0L857.2 123.8L853.4 124.0L850.4 126.8L847.4 130.9L848.9 129.3L853.4 126.4L856.7 127.1L855.7 129.6L856.0 131.3L856.7 133.1L858.7 134.0L861.0 134.0L863.2 131.6L863.2 133.8L861.0 135.5L857.9 136.5L854.9 138.9L853.9 137.8L854.5 136.3L856.4 135.0L852.7 135.7L852.7 136.5L849.6 137.8L847.8 138.6L847.1 140.5L848.1 141.9L848.1 142.6L846.2 143.0L842.8 144.0L842.1 144.8L842.1 146.5L840.6 148.1L839.8 149.8L839.1 151.7L839.5 153.6L838.3 155.8L836.0 157.5L834.2 158.8L831.8 160.9L831.0 163.0L831.0 164.8L832.3 167.6L833.0 169.9L832.6 172.5L831.3 172.8L830.3 171.0L828.9 168.2L828.8 166.2L827.0 164.4L825.0 165.0L823.2 163.7L820.9 163.9L818.7 164.1L819.0 165.8L817.1 165.8L814.9 165.1L811.9 165.1L810.0 166.2L807.3 167.9L806.7 169.6L807.0 171.5L806.3 173.8L806.1 177.1L806.9 179.5L808.1 181.5L809.1 183.1L811.1 184.0L813.4 183.7L815.6 183.5L816.8 181.9L817.3 179.5L820.2 178.7L822.4 178.7L822.7 180.3L821.7 181.9L821.2 184.0L820.5 185.1L819.9 187.5L820.9 187.8L823.2 187.8L825.5 187.7L827.7 188.6L828.2 189.2L827.9 192.2L827.6 194.5L827.4 195.4L828.5 196.8L829.7 198.0L831.2 198.6L833.0 197.9L834.5 197.6L836.3 198.6L837.1 199.1L836.2 201.1L835.3 199.7L833.8 198.5L832.6 199.6L833.0 200.6L831.5 200.9L830.4 199.9L828.8 199.6L827.7 199.1L827.4 198.3L825.8 197.3L824.2 196.8L824.4 195.3L822.7 193.4L821.5 192.2L820.2 191.9L817.9 191.1L815.6 190.6L814.4 189.7L812.2 187.5L810.6 187.2L808.8 188.0L806.6 187.7L804.3 186.6L801.6 185.6L799.8 184.5L797.5 183.9L795.2 181.9L794.3 180.5L794.8 178.7L793.7 176.6L792.2 174.6L789.9 172.5L788.6 171.8L788.0 169.6L786.8 168.1L785.4 167.0L783.9 165.3L783.1 162.7L781.6 161.8L780.6 161.4L780.4 163.0L781.6 165.3L783.1 167.4L784.7 169.9L785.9 172.1L786.9 174.1L788.4 175.9L787.7 176.4L786.5 175.4L784.7 173.6L784.2 171.3L782.4 169.9L780.9 168.4L781.3 167.0L780.1 165.3L778.6 163.6L777.6 161.4L776.8 159.8L775.1 157.7L773.3 156.8L771.7 156.2L769.8 152.7L768.8 150.6L768.0 149.5L766.8 146.9L766.1 145.2L766.4 141.9L765.8 139.9L766.5 136.8L766.5 133.1L765.5 128.2L768.0 128.6L768.8 130.7L769.1 128.0L768.0 126.4L765.8 124.5L762.7 122.6L760.8 120.9L760.5 118.5L758.2 115.9L757.0 113.4L755.9 110.7L753.7 108.0L751.4 104.4L749.1 102.4L746.9 102.1L743.9 99.2L740.1 98.0L736.3 97.7L733.3 95.8L730.3 95.5L728.0 98.6L725.0 100.1L725.0 95.8L727.2 94.3L724.2 95.5L721.9 99.5L720.4 101.8L718.2 104.7L715.1 107.5L711.4 110.7L708.3 112.3L705.3 113.1L707.6 110.7L710.6 109.4L713.6 106.7L715.9 103.8L716.4 101.5L713.6 101.8L711.4 101.5L709.1 101.8L709.1 98.6L706.1 98.0L704.1 95.5L703.8 91.7L705.0 88.5L707.6 87.8L710.3 86.5L710.6 83.7L708.3 83.3L705.3 83.3L702.6 83.0ZM767.6 128.2L764.3 127.1L760.2 122.8L762.0 122.8L765.0 125.0L767.1 127.1ZM755.6 119.2L754.1 116.7L752.9 114.4L754.7 114.7L754.9 117.2ZM752.9 111.5L750.7 108.0L748.7 104.4L750.2 104.1L752.2 107.8L754.0 111.3ZM720.4 106.7L722.4 104.1L723.9 103.3L723.8 105.5L721.9 107.2ZM694.4 87.1L697.0 86.1L698.8 87.5L697.0 88.5ZM701.1 97.4L703.1 96.8L703.5 98.3L701.5 98.6ZM777.9 66.1L784.7 68.1L792.2 66.5L799.8 66.1L801.3 60.9L796.7 57.2L795.2 48.5L790.7 45.9L786.2 48.5L781.6 45.3L775.6 47.9L774.1 54.4L776.3 59.1L781.6 60.9ZM764.3 52.5L767.3 56.8L772.6 54.4L776.3 47.9L779.4 44.3L776.3 40.4L771.1 39.3L765.8 43.2ZM777.1 31.7L781.6 38.2L787.7 38.8L793.7 36.5L794.5 30.4L789.2 26.6L783.1 28.5L777.1 27.9ZM799.0 54.4L804.3 55.3L807.6 49.5L806.6 43.2L802.0 42.7L799.3 47.9ZM798.3 35.3L805.8 36.5L807.3 29.2L802.8 25.9L797.5 29.2ZM803.5 66.1L808.4 67.7L809.9 64.4L806.6 62.2ZM795.2 15.5L802.8 18.4L805.8 12.5L798.3 7.8ZM768.0 29.2L774.1 32.3L777.9 27.2L774.1 21.9L769.5 23.9ZM718.2 181.5L719.4 181.0L719.8 181.9L718.6 182.7ZM-406.1 408.5L-391.0 410.8L-375.9 407.0L-371.3 400.1L-360.8 396.8L-345.7 387.5L-330.5 383.6L-315.4 381.9L-300.3 384.7L-289.7 376.6L-285.2 374.0L-277.7 376.6L-262.5 377.6L-252.0 376.6L-247.4 371.5L-242.9 362.3L-237.6 353.8L-235.3 347.9L-231.6 342.4L-227.0 338.9L-221.7 336.5L-220.2 337.2L-222.5 340.7L-225.5 344.2L-227.8 347.9L-230.8 351.8L-227.8 355.9L-226.3 362.3L-226.3 371.5L-225.5 381.9L-227.8 387.5L-221.7 396.8L-209.7 404.9L-197.6 407.0L-188.5 407.0L-179.4 396.8L-174.9 390.5L-167.3 381.9L-161.3 376.6L-155.3 371.5L-149.2 366.8L-141.7 365.9L-134.1 362.3L-126.5 362.3L-119.0 362.3L-111.4 360.1L-103.9 362.3L-96.3 362.3L-88.8 360.1L-84.2 356.7L-76.7 360.1L-73.7 357.9L-66.1 352.6L-58.5 349.9L-52.5 346.1L-48.0 349.1L-43.4 351.0L-35.9 352.6L-29.8 353.8L-25.3 360.1L-20.8 360.1L-16.2 355.9L-10.2 349.9L-2.6 347.9L4.9 347.2L9.5 346.1L17.0 345.0L24.6 346.8L32.1 346.1L39.7 347.9L47.2 349.1L54.8 347.2L62.3 346.1L69.9 346.1L77.5 348.7L85.0 349.9L92.6 355.0L100.1 357.9L107.7 362.3L115.2 365.4L122.8 368.7L123.5 371.5L119.8 379.2L115.2 387.5L113.0 400.1L116.7 407.0L122.8 405.6L137.9 408.5L137.9 408.5L153.0 410.8L168.1 407.0L172.7 400.1L183.2 396.8L198.3 387.5L213.5 383.6L228.6 381.9L243.7 384.7L254.3 376.6L258.8 374.0L266.3 376.6L281.5 377.6L292.0 376.6L296.6 371.5L301.1 362.3L306.4 353.8L308.7 347.9L312.4 342.4L317.0 338.9L322.3 336.5L323.8 337.2L321.5 340.7L318.5 344.2L316.2 347.9L313.2 351.8L316.2 355.9L317.7 362.3L317.7 371.5L318.5 381.9L316.2 387.5L322.3 396.8L334.3 404.9L346.4 407.0L355.5 407.0L364.6 396.8L369.1 390.5L376.7 381.9L382.7 376.6L388.7 371.5L394.8 366.8L402.3 365.9L409.9 362.3L417.5 362.3L425.0 362.3L432.6 360.1L440.1 362.3L447.7 362.3L455.2 360.1L459.8 356.7L467.3 360.1L470.3 357.9L477.9 352.6L485.5 349.9L491.5 346.1L496.0 349.1L500.6 351.0L508.1 352.6L514.2 353.8L518.7 360.1L523.2 360.1L527.8 355.9L533.8 349.9L541.4 347.9L548.9 347.2L553.5 346.1L561.0 345.0L568.6 346.8L576.1 346.1L583.7 347.9L591.2 349.1L598.8 347.2L606.3 346.1L613.9 346.1L621.5 348.7L629.0 349.9L636.6 355.0L644.1 357.9L651.7 362.3L659.2 365.4L666.8 368.7L667.5 371.5L663.8 379.2L659.2 387.5L657.0 400.1L660.7 407.0L666.8 405.6L681.9 408.5L681.9 408.5L697.0 410.8L712.1 407.0L716.7 400.1L727.2 396.8L742.3 387.5L757.5 383.6L772.6 381.9L787.7 384.7L798.3 376.6L802.8 374.0L810.3 376.6L825.5 377.6L836.0 376.6L840.6 371.5L845.1 362.3L850.4 353.8L852.7 347.9L856.4 342.4L861.0 338.9L866.3 336.5L867.8 337.2L865.5 340.7L862.5 344.2L860.2 347.9L857.2 351.8L860.2 355.9L861.7 362.3L861.7 371.5L862.5 381.9L860.2 387.5L866.3 396.8L878.3 404.9L890.4 407.0L899.5 407.0L908.6 396.8L913.1 390.5L920.7 381.9L926.7 376.6L932.7 371.5L938.8 366.8L946.3 365.9L953.9 362.3L961.5 362.3L969.0 362.3L976.6 360.1L984.1 362.3L991.7 362.3L999.2 360.1L1003.8 356.7L1011.3 360.1L1014.3 357.9L1021.9 352.6L1029.5 349.9L1035.5 346.1L1040.0 349.1L1044.6 351.0L1052.1 352.6L1058.2 353.8L1062.7 360.1L1067.2 360.1L1071.8 355.9L1077.8 349.9L1085.4 347.9L1092.9 347.2L1097.5 346.1L1105.0 345.0L1112.6 346.8L1120.1 346.1L1127.7 347.9L1135.2 349.1L1142.8 347.2L1150.3 346.1L1157.9 346.1L1165.5 348.7L1173.0 349.9L1180.6 355.0L1188.1 357.9L1195.7 362.3L1203.2 365.4L1210.8 368.7L1211.5 371.5L1207.8 379.2L1203.2 387.5L1201.0 400.1L1204.7 407.0L1210.8 405.6L1225.9 408.5L1225.9 486.0 L-406.1 486.0 Z" fill="#f2efe9" stroke="#e6e4dc" stroke-width=".5" stroke-linejoin="round"/><path d="M22.6 120.9L24.6 120.7L29.1 116.5L32.1 110.5L31.2 109.9L28.3 115.2L25.3 118.5ZM480.9 136.8L482.4 133.5L485.5 132.0L488.5 132.4L490.0 134.6L487.7 136.8L487.0 139.9L489.2 141.9L490.0 145.0L491.5 147.9L491.2 151.2L488.5 152.1L485.5 151.2L483.9 148.9L484.7 145.0L483.2 142.3L481.7 139.9ZM270.9 131.8L274.7 129.1L278.4 127.5L281.5 129.3L282.1 132.2L278.4 132.4L275.4 131.8L273.1 132.2ZM277.2 142.6L279.5 142.3L279.6 138.9L281.2 135.3L279.9 133.8L278.0 135.7L277.1 139.5ZM282.2 133.8L286.0 133.5L289.0 135.3L288.3 136.8L286.4 139.5L285.2 139.7L284.0 137.2L283.9 135.3ZM283.9 142.6L286.7 142.8L290.5 140.7L290.5 140.1L288.3 140.7L285.2 141.5ZM289.3 139.3L293.5 139.3L294.8 138.4L294.3 137.4L292.0 137.9L290.1 138.4ZM260.6 115.2L262.9 115.2L264.4 122.1L263.3 123.6L261.8 119.7ZM221.0 77.2L227.1 81.6L231.6 79.0L229.3 74.1L224.0 74.5ZM233.1 94.9L236.9 95.2L242.2 91.1L244.4 89.1L240.7 88.8L236.1 91.1ZM458.0 212.3L461.1 211.5L461.4 213.5L460.1 215.9L458.3 215.8L457.8 213.8ZM566.6 120.9L568.6 120.7L573.1 116.5L576.1 110.5L575.2 109.9L572.3 115.2L569.3 118.5ZM498.0 135.7L499.8 132.4L502.5 132.4L502.1 136.1L499.8 137.8ZM521.0 133.5L523.2 131.8L528.5 132.0L529.3 133.1L524.0 133.5L521.7 135.3ZM455.5 98.0L457.0 94.0L459.5 94.6L459.3 97.1L457.5 98.3ZM461.7 94.3L462.8 90.1L464.3 91.7L464.3 94.9ZM304.1 235.4L305.6 235.9L305.9 237.1L304.4 236.5ZM454.0 217.1L454.9 217.4L457.0 225.0L456.0 225.0L454.2 220.3ZM461.3 226.6L462.3 226.7L463.1 233.7L462.2 233.8L461.6 229.5ZM430.3 191.4L432.1 191.4L432.0 192.8L430.6 192.6ZM804.6 115.2L806.9 115.2L808.4 122.1L807.3 123.6L805.8 119.7ZM765.0 77.2L771.1 81.6L775.6 79.0L773.3 74.1L768.0 74.5ZM777.1 94.9L780.9 95.2L786.2 91.1L788.4 89.1L784.7 88.8L780.1 91.1Z" fill="#b0d2dd"/><path d="M-41.6 154.4L-36.6 153.1L-33.6 151.0L-29.4 151.6L-26.1 152.3L-20.9 151.4L-22.9 146.9L-17.9 144.0L-12.9 141.7L-12.9 135.7L-9.4 134.6L-4.9 131.1L-2.2 126.6M-60.8 132.2L-63.8 128.2L-62.6 123.8L-57.0 120.4L-51.0 122.4L-45.5 122.1L-41.3 122.6L-41.9 117.2L-31.0 112.1L-27.1 111.3L-23.2 115.9L-18.5 114.7L-13.2 122.6L-8.1 122.1L-2.2 126.6M-2.2 126.6L-1.1 127.7L3.3 135.3L10.1 137.2L11.6 140.5L19.7 140.9L24.6 142.8L32.1 140.7L35.1 138.2L35.0 135.7L40.7 134.6L46.8 132.2L43.3 129.8L40.7 129.3L42.2 125.0L38.6 123.8L32.1 126.4L27.6 124.0L20.5 123.1L14.4 123.3L12.9 125.2L4.9 122.8L-1.4 126.4M42.2 125.0L46.2 123.8L48.4 116.5L52.7 115.9L56.3 117.7L58.7 125.0L63.3 127.1L69.4 128.4L67.0 135.5L64.3 135.9L64.3 139.9L63.3 141.1M63.3 141.1L62.2 139.9L59.3 141.9L57.7 142.3L53.9 145.7M57.4 150.2L59.9 148.7M-20.9 151.4L-16.2 154.6L-14.4 160.0L-11.7 164.1L-7.3 165.7L-1.0 168.1L0.1 169.3L5.1 169.8L4.9 168.4L8.9 165.7L12.9 167.6L15.0 168.6L15.0 171.5L13.2 174.6L15.7 177.6L18.8 179.2L20.2 177.3L25.2 175.8L27.1 177.9L29.1 178.6M-11.7 164.1L-13.1 166.5L-7.3 168.9L-1.0 170.6L-1.0 168.1M5.4 178.9L5.8 175.1L3.7 174.6L5.1 172.6L1.6 172.5L1.6 170.1L-0.5 170.4L-1.0 171.6L0.4 174.1L-0.1 177.6L0.4 178.2M5.4 178.9L6.9 174.6L8.9 172.6L12.5 168.4L12.9 167.6M15.7 177.6L17.2 180.7L14.0 181.5L13.7 183.5L15.3 186.9L14.3 188.9L15.8 191.1L15.7 194.0L14.9 196.5M17.2 180.7L19.0 181.9L18.7 185.1L20.2 184.0L23.1 183.9L24.3 186.9L25.5 188.6L24.9 190.2L21.4 190.3L20.6 191.3L21.4 194.2M18.8 179.2L20.2 179.2L24.0 180.5L22.9 182.3L24.9 183.4L28.5 188.8L28.5 193.3L25.9 194.2L26.7 195.3L23.7 196.2M24.9 190.2L28.5 189.5M17.2 202.2L18.7 203.4L20.2 202.6M31.7 209.6L32.9 210.6L35.4 209.9L39.1 209.9L41.0 205.3L43.5 205.6M79.0 215.9L79.0 225.8M53.4 226.3L54.9 226.0L54.6 225.7M196.8 63.5L196.8 97.1L199.9 97.7L202.1 101.0L205.1 98.9L208.3 102.7L210.7 107.8L213.5 109.7L213.2 112.1M223.6 126.8L266.0 126.8L266.8 126.1L271.6 128.9L274.7 129.1L276.3 128.4L281.8 131.6L283.7 133.5L285.2 135.0L285.4 139.9L284.3 141.9L290.5 140.1L290.2 139.1L293.8 138.6L296.6 135.7L301.9 135.7L303.7 133.1L305.3 130.4L307.4 131.1L307.4 134.2L308.4 135.3M232.9 160.0L236.6 159.7L242.2 162.2L246.4 162.2L246.4 161.3L249.0 161.3L252.0 165.1L254.0 166.2L255.2 164.8L256.7 164.8L259.5 168.8L260.3 170.6L263.0 171.5M270.6 189.7L270.6 188.8L271.3 187.3L273.1 187.3L271.8 185.6L272.4 184.7L275.1 184.7L275.1 187.7L276.6 188.0M275.1 187.7L275.0 190.0L273.7 190.9M275.0 190.0L277.2 191.6M278.0 192.2L280.2 190.9L281.8 189.4L284.2 189.2M280.4 195.1L281.9 195.3L283.4 195.4M284.6 199.7L284.6 197.6L285.1 197.4M292.9 199.0L292.2 200.9M302.2 193.1L300.5 195.0L299.7 198.0L300.5 199.3L300.9 200.8L304.0 201.4L305.0 202.8L307.9 202.6L307.4 205.5L308.2 206.9L308.2 209.3L308.8 210.2M290.8 209.7L292.8 210.9L296.1 212.2L296.9 212.3L298.7 214.0L304.1 218.5M288.6 217.1L288.7 218.7L290.4 219.6L291.4 217.1L295.7 214.4L296.1 212.2M308.8 210.2L304.4 209.4L304.3 218.4L299.7 219.9L298.2 223.2L299.7 226.3L303.2 226.4L303.2 228.7L304.9 228.7L306.2 228.9L311.1 226.7L311.2 229.8L318.5 233.1L318.9 237.0L321.8 237.0L323.0 240.0L322.0 242.5L322.4 246.3L325.7 246.6L327.4 252.0L328.8 253.0L328.6 254.7L322.9 259.9L329.2 266.1M304.9 238.9L306.1 242.1L306.8 245.3L308.7 247.4L306.4 250.5L306.7 254.2L304.6 256.8L304.1 261.3L303.5 264.9L304.4 267.1L303.5 270.4L302.3 275.9L301.6 282.1L301.4 287.9L300.6 295.6L298.8 299.3L300.6 303.3L306.5 305.0M304.9 238.9L304.9 235.4L305.8 231.0L304.9 228.7M308.7 247.4L312.4 246.3L315.2 246.4L316.5 248.2L322.7 251.5L327.4 252.0M315.2 246.4L322.0 242.5M318.2 204.1L319.2 204.3L319.4 209.9L324.5 209.1L328.3 208.7L330.3 208.5L331.8 205.8M323.5 203.1L322.3 206.0L324.5 209.1M328.3 203.2L327.7 205.6L328.3 208.7M319.2 199.1L317.1 203.1L318.2 204.1L312.9 205.8L314.1 208.5L310.9 210.8L308.8 210.2M396.6 142.1L400.1 142.1L399.5 145.9L398.7 151.4M407.2 139.1L411.0 140.5L414.7 141.1M421.2 138.2L420.5 137.4L420.5 133.8L419.1 133.1L421.4 130.0L422.3 126.8L419.6 125.7L418.7 125.7L416.2 124.5L413.8 121.9M420.5 133.8L422.7 133.1L425.8 131.8L428.6 132.0L430.6 132.4L430.6 134.4M421.4 130.0L424.4 130.2L425.8 131.8M424.4 130.2L429.5 130.2L429.2 127.7L430.8 127.3L428.2 123.8L432.3 122.4L431.5 114.9M419.6 125.7L419.1 122.6L420.5 116.5M432.3 122.4L435.4 123.6L438.3 125.7L444.1 126.6L443.4 128.2L446.2 129.1L450.1 128.4L452.5 134.6L454.8 135.0M439.8 113.4L444.4 113.6L445.4 114.9L445.6 120.9L446.3 122.6L444.1 126.6M430.8 127.3L435.6 127.7L438.3 125.7M435.6 127.7L434.2 131.6L430.6 132.4M435.6 129.1L438.3 129.6L443.4 128.2M434.2 131.6L435.0 132.7L438.3 133.8L440.6 133.3L441.9 132.7L444.5 129.3M440.6 133.3L442.2 136.1L444.2 136.8L443.7 139.9L444.7 143.4L441.0 143.8L440.1 140.7L438.9 138.9L438.6 135.9L438.3 133.8M444.2 136.8L447.7 138.4L450.7 137.6L453.1 138.4M449.6 142.6L449.8 144.0L449.2 144.4M444.5 143.4L448.1 143.6L449.6 142.6L452.2 141.9M439.2 142.1L441.0 143.8L441.2 145.9L440.1 146.5M452.5 99.5L451.3 105.3L452.5 108.9L450.1 110.2L448.6 113.9L445.4 114.9M441.6 109.1L447.5 108.3L450.1 110.2M446.6 104.1L451.3 105.3M452.5 108.9L456.6 110.5L459.3 116.2L457.3 119.4L461.9 120.2L463.7 123.6L470.5 125.4L470.0 129.3L467.6 131.1M445.6 120.9L451.0 120.7L456.0 121.4L457.3 119.4M428.2 105.8L427.1 101.0L428.8 96.8L428.3 88.5L431.8 77.2L434.8 70.2L440.9 65.6L445.7 70.6L446.2 77.9L446.5 78.7M440.9 65.6L448.9 66.1L452.2 61.7L453.7 65.6L456.6 63.9M453.7 65.6L455.2 71.4L453.9 74.5L455.2 86.1L457.7 88.8L451.9 96.5M472.6 143.0L475.6 143.8L477.6 146.5L476.4 147.1L477.6 151.4L474.0 151.6L468.5 152.3L465.4 152.1L464.6 153.6M472.6 140.7L476.1 140.7L480.0 142.1L483.3 142.3M477.6 146.5L480.2 148.1L482.4 146.5L483.8 149.1M477.6 151.4L479.4 154.2L478.5 157.3L479.7 158.8L482.1 162.7L483.3 164.4M474.0 151.6L472.2 155.8L468.5 158.4L465.5 160.4L469.1 160.7L468.8 161.6L465.8 161.8L467.3 163.6L466.6 164.4L464.3 165.8L462.7 165.5M469.1 160.7L470.9 161.1L477.4 165.8L480.3 166.0L482.0 164.3L482.4 164.4M480.3 166.0L483.0 167.0M463.7 158.6L463.7 159.7L463.5 161.8L462.7 165.3M461.6 162.2L462.7 165.3M488.5 182.7L494.1 181.1L493.3 176.8L487.9 174.3M474.9 186.7L476.4 185.3L480.9 185.9L488.5 182.7L490.1 186.6M493.3 176.8L494.4 173.1L495.1 173.1M491.3 151.2L494.8 149.6L501.3 152.5L502.4 154.4L501.5 158.0L501.8 161.8L503.3 163.0L501.9 164.8L505.6 169.3L503.0 172.6M501.9 164.8L510.1 164.6L510.1 162.7L514.6 161.1L516.1 158.4L517.3 156.8L518.1 152.7L523.1 151.4M502.4 154.4L507.4 153.1L510.4 151.0L514.6 151.6L517.9 152.3L523.1 151.4L521.1 146.9L526.1 144.0L531.1 141.7L531.1 135.7L534.6 134.6L539.1 131.1L541.8 126.6M491.3 151.2L490.0 146.7M490.0 142.6L494.5 143.4L494.5 135.7L498.5 134.4L502.1 137.0L509.8 139.9L514.2 143.2L516.3 141.9L521.0 140.9L529.4 140.3L531.1 141.7M510.4 151.0L510.5 149.8L507.2 147.9L498.3 140.5L494.5 143.4M483.2 132.2L480.2 128.2L481.4 123.8L487.0 120.4L493.0 122.4L498.5 122.1L502.7 122.6L502.1 117.2L513.0 112.1L516.9 111.3L520.8 115.9L525.5 114.7L530.8 122.6L535.9 122.1L541.8 126.6M541.8 126.6L542.9 127.7L547.3 135.3L554.1 137.2L555.6 140.5L563.7 140.9L568.6 142.8L576.1 140.7L579.1 138.2L579.0 135.7L584.7 134.6L590.8 132.2L587.3 129.8L584.7 129.3L586.2 125.0L582.6 123.8L576.1 126.4L571.6 124.0L564.5 123.1L558.4 123.3L556.9 125.2L548.9 122.8L542.6 126.4M586.2 125.0L590.2 123.8L592.4 116.5L596.7 115.9L600.3 117.7L602.7 125.0L607.3 127.1L613.4 128.4L611.0 135.5L608.3 135.9L608.3 139.9L607.3 141.1M607.3 141.1L606.2 139.9L603.3 141.9L601.7 142.3L597.9 145.7M601.4 150.2L603.9 148.7M523.1 151.4L527.8 154.6L529.6 160.0L532.3 164.1L536.7 165.7L543.0 168.1L544.1 169.3L549.1 169.8L548.9 168.4L552.9 165.7L556.9 167.6L559.0 168.6L559.0 171.5L557.2 174.6L559.7 177.6L562.8 179.2L564.2 177.3L569.2 175.8L571.1 177.9L573.1 178.6M523.1 151.4L527.5 154.6L526.3 159.8L522.5 159.5L522.6 162.7L517.2 168.1L515.7 171.8L517.3 174.0L513.7 174.1L513.0 175.3M532.3 164.1L530.9 166.5L536.7 168.9L543.0 170.6L543.0 168.1M549.4 178.9L549.8 175.1L547.7 174.6L549.1 172.6L545.6 172.5L545.6 170.1L543.5 170.4L543.0 171.6L544.4 174.1L543.9 177.6L544.4 178.2M549.4 178.9L550.9 174.6L552.9 172.6L556.5 168.4L556.9 167.6M559.7 177.6L561.2 180.7L558.0 181.5L557.7 183.5L559.3 186.9L558.3 188.9L559.8 191.1L559.7 194.0L558.9 196.5M561.2 180.7L563.0 181.9L562.7 185.1L564.2 184.0L567.1 183.9L568.3 186.9L569.5 188.6L568.9 190.2L565.4 190.3L564.6 191.3L565.4 194.2M562.8 179.2L564.2 179.2L568.0 180.5L566.9 182.3L568.9 183.4L572.5 188.8L572.5 193.3L569.9 194.2L570.7 195.3L567.7 196.2M568.9 190.2L572.5 189.5M561.2 202.2L562.7 203.4L564.2 202.6M575.7 209.6L576.9 210.6L579.4 209.9L583.1 209.9L585.0 205.3L587.5 205.6M623.0 215.9L623.0 225.8M597.4 226.3L598.9 226.0L598.6 225.7M406.6 155.3L407.3 158.6L408.1 160.7L404.5 161.4L404.3 162.9L396.8 166.7L396.8 168.9L390.0 168.4M396.8 168.9L402.6 173.0L412.6 180.7L414.9 182.7L416.2 182.6L419.0 182.1L428.0 175.4L424.9 170.4L424.3 164.1L422.4 161.4L421.2 157.7L422.9 151.9M424.3 164.1L427.3 158.8M396.8 168.9L396.8 171.3L391.8 171.3L391.8 175.4L390.3 176.3L390.1 179.0L384.2 179.0M391.8 171.3L402.6 173.0M402.6 173.0L400.1 173.0L401.6 186.7L401.9 188.3L392.5 188.1L391.5 189.4L387.8 186.6L385.0 187.3M447.7 161.4L447.7 177.9L465.7 177.9M447.7 177.9L447.7 181.1L446.2 181.1L446.2 188.0L444.5 188.1L443.1 192.8L444.5 195.3L444.5 195.4L446.2 198.8L451.3 204.1L456.4 206.7L461.3 205.6L464.1 205.0L461.4 199.1L460.1 196.5L461.7 195.9L462.8 193.4L465.1 190.2L465.7 186.4L468.2 184.3M446.2 181.9L434.1 175.4L432.6 176.3L428.0 175.4M432.6 176.3L433.3 179.5L433.3 186.1L430.3 190.0L430.5 191.1M416.2 182.6L416.2 186.9L415.3 188.3L415.2 193.9L414.1 193.1L413.5 193.9L411.3 195.3L409.6 195.1L405.7 195.3L405.7 197.3L401.6 196.2L400.8 196.5L397.8 196.5L396.9 200.3L398.6 205.3M415.3 194.2L415.8 196.8L414.0 200.0L414.0 202.5M415.2 193.9L416.1 191.4L420.5 192.2L423.5 192.5L428.5 192.0L430.5 191.1L432.0 193.4L431.4 196.8L429.8 197.4L427.7 201.4L425.9 201.4L423.2 203.2L422.9 204.7M411.3 195.3L412.3 198.3L412.3 202.6M409.6 195.1L410.5 196.8L410.7 200.6L411.7 202.8M405.7 197.3L405.8 199.9L405.1 202.0L405.7 204.3M396.9 200.3L394.3 199.1L393.7 200.9L392.5 201.4M389.8 198.2L391.0 197.0L393.3 196.8L394.3 199.1M391.5 189.4L392.7 193.1L389.2 192.6L387.2 195.3M392.7 193.1L396.5 193.4L397.8 196.5M384.7 193.1L386.5 192.8L389.2 192.6M432.0 193.4L433.3 196.8L431.1 198.3L432.9 200.6L431.8 204.1L434.2 208.7L430.0 208.7L427.0 208.7L427.0 210.5L424.7 210.5M434.2 208.7L438.0 206.7L437.9 205.5L443.7 205.8L448.1 204.4L451.3 204.1M433.3 196.8L438.5 198.5L444.5 195.4M427.0 208.7L430.0 208.7L431.7 214.9L428.8 217.6L426.7 217.9M438.0 206.7L436.6 212.8L434.4 215.3L433.9 218.0L431.7 219.3L428.3 220.8M456.4 206.7L456.7 208.7L454.8 210.8L454.6 214.1L453.7 216.2L454.3 218.7L456.4 224.4L453.6 224.9L452.8 226.0L453.1 230.3L454.9 232.4L452.8 231.5L451.0 229.6L446.8 229.3L446.0 228.6L443.4 229.0L442.8 224.0L439.4 224.0L437.1 224.3L435.0 220.9L429.7 220.9L428.3 220.8M461.3 205.6L461.1 211.8L461.3 213.5L466.7 216.5L469.1 219.1M461.3 213.5L456.0 213.5L454.6 214.1M456.4 224.4L459.6 226.3L461.7 226.7L462.2 229.6L466.6 229.8L470.9 228.0M464.1 205.0L467.5 206.6L470.2 206.1L473.2 206.1L471.9 213.4L472.8 214.6M473.2 206.1L474.9 204.9L477.9 204.4L482.4 199.9L480.9 199.9L476.4 198.3L474.9 195.3L474.0 193.0M474.9 195.3L473.1 195.3L474.0 193.0L470.3 189.9L465.1 190.2M482.4 199.9L483.9 194.8M446.8 229.3L446.2 231.8L443.1 231.8L443.1 236.8L445.3 239.0L448.1 239.3L450.7 239.5L453.7 236.0L455.8 235.9L455.5 234.6L460.1 233.4L459.3 232.7L460.5 230.9L460.2 226.6L459.6 226.3M460.1 233.4L461.9 234.3L464.0 236.5L463.2 238.2L462.2 236.5L460.1 233.4M455.8 235.9L459.6 237.6L459.5 242.2L457.2 246.7L454.3 246.4L452.2 245.4L448.1 239.3M457.2 246.7L458.3 250.2L458.1 252.5L459.6 254.2M454.3 246.4L450.5 248.9L448.6 252.0L444.7 251.5L441.2 254.2L440.1 250.7L440.1 246.1L441.6 246.1L441.6 240.1L445.3 239.0M441.6 240.1L437.9 239.3L431.1 238.7L427.7 238.5M440.1 250.7L440.1 256.8L436.2 257.3L434.8 257.1M443.1 236.8L443.1 231.8M740.8 63.5L740.8 97.1L743.9 97.7L746.1 101.0L749.1 98.9L752.3 102.7L754.7 107.8L757.5 109.7L757.2 112.1M767.6 126.8L810.0 126.8L810.8 126.1L815.6 128.9L818.7 129.1L820.3 128.4L825.8 131.6L827.7 133.5L829.2 135.0L829.4 139.9L828.3 141.9L834.5 140.1L834.2 139.1L837.8 138.6L840.6 135.7L845.9 135.7L847.7 133.1L849.3 130.4L851.4 131.1L851.4 134.2L852.4 135.3M776.9 160.0L780.6 159.7L786.2 162.2L790.4 162.2L790.4 161.3L793.0 161.3L796.0 165.1L798.0 166.2L799.2 164.8L800.7 164.8L803.5 168.8L804.3 170.6L807.0 171.5" fill="none" stroke="#d9c8d6" stroke-width=".7" stroke-linejoin="round" opacity=".55"/></g><g fill="#1428e6"><circle cx="163.5" cy="78.7" r="2.65"/><circle cx="164.4" cy="86.0" r="2.65"/><circle cx="161.5" cy="93.7" r="2.65"/><circle cx="153.0" cy="105.4" r="2.65"/><circle cx="185.9" cy="84.3" r="2.65"/><circle cx="202.6" cy="88.3" r="2.65"/><circle cx="139.1" cy="120.2" r="3.00"/><circle cx="141.2" cy="119.8" r="3.04"/><circle cx="142.1" cy="119.6" r="3.09"/><circle cx="144.1" cy="119.4" r="3.13"/><circle cx="146.4" cy="118.3" r="3.18"/><circle cx="147.3" cy="118.0" r="3.22"/><circle cx="149.4" cy="117.7" r="3.27"/><circle cx="150.5" cy="117.2" r="3.31"/><circle cx="152.4" cy="115.8" r="3.36"/><circle cx="154.2" cy="116.2" r="3.40"/><circle cx="156.2" cy="116.0" r="3.45"/><circle cx="157.8" cy="114.6" r="3.49"/><circle cx="159.4" cy="113.3" r="3.54"/><circle cx="160.1" cy="113.5" r="3.58"/><circle cx="162.1" cy="111.8" r="3.63"/><circle cx="163.3" cy="111.0" r="3.67"/><circle cx="194.6" cy="93.3" r="3.00"/><circle cx="210.7" cy="107.1" r="2.98"/><circle cx="209.3" cy="110.2" r="2.89"/><circle cx="209.3" cy="99.7" r="2.83"/><circle cx="210.3" cy="96.2" r="2.63"/><circle cx="207.6" cy="109.7" r="2.96"/><circle cx="206.5" cy="108.0" r="2.58"/><circle cx="210.7" cy="97.9" r="2.50"/><circle cx="212.9" cy="99.1" r="2.63"/><circle cx="210.0" cy="106.2" r="2.62"/><circle cx="213.6" cy="106.4" r="3.08"/><circle cx="204.9" cy="96.0" r="3.00"/><circle cx="206.8" cy="96.4" r="3.00"/><circle cx="209.2" cy="100.0" r="3.00"/><circle cx="211.3" cy="102.0" r="3.00"/><circle cx="212.8" cy="105.1" r="3.00"/><circle cx="214.2" cy="107.6" r="3.00"/><circle cx="215.9" cy="110.6" r="3.00"/><circle cx="221.0" cy="117.8" r="3.65"/><circle cx="218.2" cy="119.7" r="3.37"/><circle cx="218.0" cy="119.5" r="3.04"/><circle cx="222.2" cy="117.3" r="3.09"/><circle cx="222.1" cy="121.1" r="3.12"/><circle cx="214.2" cy="126.8" r="2.65"/><circle cx="213.9" cy="130.1" r="2.65"/><circle cx="213.5" cy="133.5" r="2.65"/><circle cx="212.9" cy="136.8" r="2.65"/><circle cx="220.2" cy="142.0" r="2.89"/><circle cx="220.4" cy="145.2" r="2.83"/><circle cx="220.7" cy="143.5" r="2.79"/><circle cx="219.7" cy="144.0" r="3.20"/><circle cx="221.8" cy="140.7" r="2.99"/><circle cx="248.7" cy="145.5" r="3.50"/><circle cx="239.6" cy="149.5" r="3.40"/><circle cx="243.0" cy="152.8" r="3.40"/><circle cx="247.0" cy="155.5" r="3.40"/><circle cx="250.3" cy="156.9" r="3.40"/><circle cx="240.4" cy="156.0" r="3.40"/><circle cx="244.4" cy="158.0" r="3.40"/><circle cx="248.4" cy="159.5" r="3.40"/><circle cx="237.9" cy="153.0" r="3.40"/><circle cx="236.3" cy="160.2" r="2.90"/><circle cx="237.8" cy="162.7" r="2.90"/><circle cx="239.2" cy="165.3" r="2.90"/><circle cx="240.3" cy="168.0" r="2.90"/><circle cx="240.3" cy="170.9" r="2.90"/><circle cx="231.6" cy="166.2" r="2.65"/><circle cx="242.3" cy="182.6" r="3.00"/><circle cx="253.4" cy="196.3" r="3.00"/><circle cx="175.1" cy="180.9" r="2.50"/><circle cx="252.0" cy="176.3" r="3.69"/><circle cx="273.9" cy="211.3" r="3.00"/><circle cx="278.8" cy="210.7" r="2.65"/><circle cx="315.0" cy="184.9" r="3.00"/><circle cx="316.2" cy="186.2" r="3.00"/><circle cx="317.3" cy="187.4" r="3.00"/><circle cx="317.8" cy="189.0" r="3.00"/><circle cx="318.2" cy="190.7" r="3.00"/><circle cx="317.5" cy="192.3" r="3.00"/><circle cx="316.8" cy="193.8" r="3.00"/><circle cx="246.3" cy="224.3" r="2.90"/><circle cx="239.4" cy="238.8" r="2.90"/><circle cx="244.3" cy="254.1" r="2.90"/><circle cx="296.4" cy="295.5" r="3.50"/><circle cx="304.8" cy="304.3" r="2.50"/><circle cx="299.4" cy="305.5" r="3.15"/><circle cx="297.7" cy="302.5" r="3.00"/><circle cx="303.9" cy="311.6" r="2.75"/><circle cx="137.9" cy="237.2" r="2.50"/><circle cx="143.6" cy="235.4" r="2.80"/><circle cx="145.9" cy="234.7" r="2.80"/><circle cx="148.2" cy="234.0" r="2.80"/><circle cx="150.5" cy="233.4" r="2.80"/><circle cx="152.8" cy="233.1" r="2.80"/><circle cx="155.2" cy="232.7" r="2.80"/><circle cx="147.6" cy="235.9" r="3.00"/><circle cx="146.4" cy="238.8" r="3.00"/><circle cx="146.5" cy="240.8" r="3.00"/><circle cx="146.1" cy="242.5" r="3.00"/><circle cx="145.1" cy="244.7" r="3.00"/><circle cx="144.0" cy="247.2" r="3.00"/><circle cx="143.8" cy="248.8" r="3.00"/><circle cx="142.8" cy="250.9" r="3.00"/><circle cx="141.9" cy="252.8" r="3.00"/><circle cx="141.1" cy="255.3" r="3.00"/><circle cx="140.5" cy="257.2" r="3.00"/><circle cx="140.0" cy="259.3" r="3.00"/><circle cx="138.8" cy="261.2" r="3.00"/><circle cx="185.5" cy="238.2" r="2.90"/><circle cx="185.8" cy="240.0" r="2.90"/><circle cx="198.5" cy="257.3" r="2.70"/><circle cx="214.5" cy="251.0" r="2.70"/><circle cx="244.3" cy="254.4" r="2.70"/><circle cx="246.4" cy="224.7" r="2.70"/><circle cx="198.5" cy="309.6" r="2.70"/><circle cx="193.2" cy="315.0" r="2.70"/><circle cx="238.9" cy="238.6" r="2.90"/><circle cx="238.9" cy="240.4" r="2.90"/><circle cx="323.5" cy="331.5" r="2.80"/><circle cx="319.1" cy="335.1" r="2.80"/><circle cx="325.3" cy="336.9" r="2.80"/><circle cx="322.6" cy="339.6" r="2.80"/><circle cx="260.3" cy="384.1" r="2.50"/><circle cx="654.9" cy="347.5" r="2.50"/><circle cx="656.9" cy="349.2" r="2.50"/><circle cx="658.9" cy="350.9" r="2.50"/><circle cx="656.4" cy="398.9" r="2.50"/><circle cx="657.4" cy="409.2" r="3.00"/><circle cx="655.9" cy="408.0" r="3.50"/><circle cx="367.7" cy="312.9" r="3.30"/><circle cx="368.5" cy="314.5" r="3.30"/><circle cx="369.4" cy="316.1" r="3.30"/><circle cx="369.6" cy="317.8" r="3.30"/><circle cx="369.7" cy="319.6" r="3.30"/><circle cx="369.5" cy="321.4" r="3.30"/><circle cx="369.0" cy="323.2" r="3.30"/><circle cx="368.6" cy="324.9" r="3.30"/><circle cx="378.9" cy="83.4" r="3.42"/><circle cx="380.1" cy="82.9" r="3.66"/><circle cx="377.4" cy="84.4" r="3.01"/><circle cx="378.0" cy="82.4" r="3.14"/><circle cx="386.6" cy="85.6" r="3.67"/><circle cx="374.1" cy="83.2" r="3.63"/><circle cx="378.0" cy="81.6" r="3.31"/><circle cx="377.4" cy="85.5" r="3.35"/><circle cx="385.1" cy="83.7" r="3.23"/><circle cx="375.9" cy="82.2" r="3.46"/><circle cx="380.8" cy="86.3" r="3.48"/><circle cx="385.2" cy="83.2" r="3.61"/><circle cx="380.9" cy="80.3" r="3.14"/><circle cx="377.0" cy="82.9" r="3.37"/><circle cx="381.5" cy="84.6" r="3.40"/><circle cx="382.8" cy="75.3" r="3.25"/><circle cx="384.0" cy="78.5" r="3.50"/><circle cx="374.4" cy="82.3" r="3.25"/><circle cx="387.2" cy="82.5" r="3.25"/><circle cx="352.7" cy="147.8" r="2.75"/><circle cx="363.4" cy="146.9" r="3.00"/><circle cx="365.1" cy="147.6" r="3.00"/><circle cx="366.9" cy="148.2" r="3.00"/><circle cx="368.6" cy="149.1" r="3.00"/><circle cx="370.3" cy="149.7" r="3.00"/><circle cx="372.1" cy="150.2" r="3.00"/><circle cx="384.4" cy="159.2" r="3.50"/><circle cx="372.9" cy="188.3" r="2.50"/><circle cx="380.3" cy="212.7" r="2.75"/><circle cx="388.6" cy="223.4" r="2.75"/><circle cx="402.7" cy="264.8" r="2.75"/><circle cx="415.4" cy="310.3" r="2.75"/><circle cx="391.7" cy="272.2" r="2.25"/><circle cx="420.6" cy="123.8" r="2.75"/><circle cx="414.3" cy="134.4" r="2.75"/><circle cx="414.3" cy="141.9" r="2.75"/><circle cx="403.5" cy="147.8" r="2.75"/><circle cx="429.6" cy="143.5" r="3.00"/><circle cx="432.9" cy="147.0" r="3.50"/><circle cx="431.4" cy="148.5" r="3.50"/><circle cx="427.9" cy="152.0" r="3.25"/><circle cx="444.9" cy="150.9" r="3.00"/><circle cx="446.9" cy="152.4" r="3.00"/><circle cx="448.9" cy="152.2" r="3.00"/><circle cx="451.6" cy="150.9" r="3.00"/><circle cx="453.6" cy="147.5" r="3.00"/><circle cx="463.0" cy="149.5" r="3.00"/><circle cx="460.4" cy="150.5" r="3.50"/><circle cx="502.6" cy="166.9" r="3.00"/><circle cx="466.3" cy="159.6" r="2.75"/><circle cx="471.0" cy="169.6" r="3.50"/><circle cx="469.0" cy="172.9" r="3.50"/><circle cx="469.9" cy="174.5" r="3.25"/><circle cx="472.6" cy="172.3" r="3.00"/><circle cx="460.0" cy="183.2" r="2.75"/><circle cx="418.7" cy="175.8" r="2.50"/><circle cx="422.7" cy="184.1" r="3.50"/><circle cx="459.9" cy="183.1" r="2.75"/><circle cx="423.1" cy="184.7" r="3.00"/><circle cx="486.9" cy="188.0" r="2.75"/><circle cx="484.1" cy="187.6" r="3.50"/><circle cx="480.6" cy="187.7" r="3.50"/><circle cx="482.1" cy="187.4" r="3.50"/><circle cx="477.4" cy="187.7" r="3.69"/><circle cx="480.2" cy="187.8" r="3.69"/><circle cx="469.6" cy="192.2" r="3.50"/><circle cx="472.1" cy="192.5" r="3.50"/><circle cx="468.7" cy="195.2" r="3.50"/><circle cx="471.1" cy="194.6" r="3.50"/><circle cx="467.7" cy="196.4" r="3.50"/><circle cx="470.0" cy="196.5" r="3.50"/><circle cx="466.8" cy="199.2" r="3.50"/><circle cx="468.9" cy="198.5" r="3.50"/><circle cx="465.8" cy="200.6" r="3.50"/><circle cx="467.8" cy="200.9" r="3.50"/><circle cx="465.3" cy="203.1" r="3.50"/><circle cx="467.3" cy="202.7" r="3.50"/><circle cx="464.8" cy="204.2" r="3.50"/><circle cx="466.8" cy="204.8" r="3.50"/><circle cx="464.3" cy="206.1" r="3.50"/><circle cx="466.3" cy="206.2" r="3.50"/><circle cx="463.8" cy="208.3" r="3.50"/><circle cx="465.8" cy="208.9" r="3.50"/><circle cx="463.3" cy="210.8" r="3.50"/><circle cx="465.3" cy="211.3" r="3.50"/><circle cx="462.8" cy="213.0" r="3.50"/><circle cx="464.8" cy="212.9" r="3.50"/><circle cx="462.3" cy="215.2" r="3.50"/><circle cx="464.3" cy="216.0" r="3.50"/><circle cx="460.8" cy="225.4" r="2.50"/><circle cx="475.5" cy="229.4" r="3.50"/><circle cx="478.9" cy="231.2" r="3.25"/><circle cx="480.9" cy="242.1" r="2.50"/><circle cx="527.0" cy="273.0" r="3.15"/><circle cx="526.9" cy="275.0" r="3.15"/><circle cx="467.1" cy="291.8" r="3.00"/><circle cx="485.6" cy="290.2" r="2.75"/><circle cx="488.5" cy="291.6" r="2.75"/><circle cx="415.1" cy="310.5" r="2.75"/><circle cx="581.1" cy="115.0" r="2.75"/><circle cx="558.8" cy="118.1" r="2.75"/><circle cx="564.8" cy="120.4" r="2.75"/><circle cx="561.5" cy="128.8" r="3.60"/><circle cx="565.2" cy="127.5" r="3.60"/><circle cx="600.2" cy="126.1" r="3.00"/><circle cx="604.2" cy="136.8" r="2.75"/><circle cx="602.2" cy="148.8" r="2.75"/><circle cx="607.6" cy="149.9" r="2.75"/><circle cx="601.5" cy="158.6" r="3.50"/><circle cx="553.4" cy="179.8" r="3.50"/><circle cx="551.9" cy="192.2" r="3.25"/><circle cx="558.4" cy="174.7" r="3.00"/><circle cx="576.8" cy="180.8" r="2.75"/><circle cx="574.8" cy="188.1" r="2.75"/><circle cx="574.8" cy="195.8" r="2.75"/><circle cx="629.6" cy="136.4" r="3.65"/><circle cx="627.8" cy="137.9" r="3.60"/><circle cx="619.3" cy="151.8" r="3.65"/><circle cx="617.4" cy="152.4" r="3.58"/><circle cx="615.5" cy="153.2" r="3.52"/><circle cx="614.2" cy="153.9" r="3.45"/><circle cx="612.6" cy="155.2" r="3.39"/><circle cx="611.4" cy="156.5" r="3.32"/><circle cx="610.2" cy="157.2" r="3.26"/><circle cx="608.7" cy="158.5" r="3.19"/><circle cx="607.6" cy="159.9" r="3.13"/><circle cx="606.1" cy="161.4" r="3.06"/><circle cx="605.0" cy="162.8" r="3.00"/><circle cx="604.1" cy="164.4" r="2.93"/><circle cx="603.0" cy="166.2" r="2.87"/><circle cx="602.4" cy="168.1" r="2.80"/><circle cx="621.7" cy="153.8" r="3.40"/><circle cx="621.8" cy="156.0" r="3.36"/><circle cx="622.1" cy="158.3" r="3.33"/><circle cx="622.3" cy="160.9" r="3.29"/><circle cx="622.9" cy="163.0" r="3.26"/><circle cx="623.1" cy="165.7" r="3.22"/><circle cx="623.6" cy="167.5" r="3.19"/><circle cx="623.8" cy="170.1" r="3.15"/><circle cx="624.1" cy="172.3" r="3.12"/><circle cx="625.1" cy="174.2" r="3.08"/><circle cx="625.5" cy="176.1" r="3.05"/><circle cx="626.8" cy="178.5" r="3.01"/><circle cx="627.7" cy="180.6" r="2.98"/><circle cx="627.6" cy="183.1" r="2.94"/><circle cx="628.3" cy="185.1" r="2.91"/><circle cx="628.2" cy="187.2" r="2.87"/><circle cx="628.1" cy="189.8" r="2.84"/><circle cx="627.9" cy="191.9" r="2.80"/><circle cx="630.9" cy="180.5" r="2.80"/><circle cx="631.0" cy="183.2" r="2.80"/><circle cx="631.2" cy="186.0" r="2.80"/><circle cx="663.0" cy="110.8" r="2.50"/><circle cx="675.7" cy="118.1" r="3.00"/><circle cx="678.3" cy="118.7" r="3.00"/><circle cx="681.0" cy="119.1" r="3.00"/><circle cx="594.4" cy="172.8" r="3.50"/><circle cx="595.7" cy="174.0" r="3.50"/><circle cx="594.2" cy="180.2" r="3.50"/><circle cx="593.4" cy="212.0" r="2.60"/><circle cx="596.4" cy="211.5" r="3.50"/><circle cx="606.2" cy="217.4" r="3.30"/><circle cx="605.6" cy="219.2" r="3.30"/><circle cx="605.0" cy="220.9" r="3.30"/><circle cx="604.4" cy="222.7" r="3.30"/><circle cx="635.1" cy="223.2" r="3.53"/><circle cx="640.9" cy="218.7" r="3.64"/><circle cx="644.1" cy="217.3" r="3.70"/><circle cx="639.0" cy="220.7" r="3.40"/><circle cx="642.3" cy="221.4" r="3.40"/><circle cx="644.0" cy="221.7" r="3.40"/><circle cx="646.8" cy="222.9" r="3.40"/><circle cx="648.7" cy="223.4" r="3.40"/><circle cx="650.5" cy="224.9" r="3.40"/><circle cx="660.7" cy="227.2" r="3.00"/><circle cx="662.9" cy="232.1" r="3.25"/><circle cx="663.5" cy="234.0" r="3.25"/><circle cx="664.7" cy="235.7" r="3.25"/><circle cx="665.3" cy="237.8" r="3.25"/><circle cx="666.0" cy="239.7" r="3.25"/><circle cx="666.8" cy="241.5" r="3.25"/><circle cx="667.9" cy="243.1" r="3.25"/><circle cx="669.2" cy="245.1" r="3.25"/><circle cx="670.6" cy="246.8" r="3.25"/><circle cx="678.3" cy="241.4" r="2.75"/><circle cx="679.9" cy="239.7" r="2.75"/><circle cx="681.4" cy="238.1" r="2.75"/><circle cx="628.9" cy="240.4" r="2.75"/><circle cx="625.8" cy="273.2" r="2.75"/><circle cx="677.2" cy="276.8" r="3.67"/><circle cx="672.3" cy="268.9" r="3.00"/><circle cx="680.9" cy="268.2" r="3.00"/><circle cx="678.9" cy="270.5" r="3.25"/><circle cx="673.9" cy="271.5" r="3.25"/></g><g fill="#1428e6" fill-opacity=".2" stroke="#1428e6" stroke-width="3.3"><circle cx="164.9" cy="110.7" r="2.07"/><circle cx="166.7" cy="109.6" r="2.11"/><circle cx="167.7" cy="107.7" r="2.16"/><circle cx="169.4" cy="107.5" r="2.20"/><circle cx="170.4" cy="105.6" r="2.25"/><circle cx="171.5" cy="104.5" r="2.29"/><circle cx="173.1" cy="104.2" r="2.34"/><circle cx="174.2" cy="102.3" r="2.38"/><circle cx="174.9" cy="101.5" r="2.43"/><circle cx="175.7" cy="100.1" r="2.47"/><circle cx="177.5" cy="98.3" r="2.52"/><circle cx="178.7" cy="97.0" r="2.56"/><circle cx="178.8" cy="95.1" r="2.61"/><circle cx="179.3" cy="93.7" r="2.65"/><circle cx="193.5" cy="92.5" r="4.35"/><circle cx="191.7" cy="90.8" r="3.35"/><circle cx="228.3" cy="118.1" r="2.60"/><circle cx="219.9" cy="120.1" r="2.30"/><circle cx="223.7" cy="119.0" r="2.33"/><circle cx="222.4" cy="120.7" r="2.10"/><circle cx="224.4" cy="121.6" r="2.10"/><circle cx="222.8" cy="122.6" r="2.10"/><circle cx="224.8" cy="123.2" r="2.10"/><circle cx="223.2" cy="124.5" r="2.10"/><circle cx="225.2" cy="124.7" r="2.10"/><circle cx="223.5" cy="127.6" r="2.10"/><circle cx="225.5" cy="126.7" r="2.10"/><circle cx="223.9" cy="129.2" r="2.10"/><circle cx="225.9" cy="129.0" r="2.10"/><circle cx="224.3" cy="130.9" r="2.10"/><circle cx="226.3" cy="131.0" r="2.10"/><circle cx="224.7" cy="132.6" r="2.10"/><circle cx="226.7" cy="133.4" r="2.10"/><circle cx="225.0" cy="134.5" r="2.10"/><circle cx="227.0" cy="134.7" r="2.10"/><circle cx="225.4" cy="136.4" r="2.10"/><circle cx="227.4" cy="136.7" r="2.10"/><circle cx="225.9" cy="139.1" r="2.10"/><circle cx="227.8" cy="139.7" r="2.10"/><circle cx="226.5" cy="141.4" r="2.10"/><circle cx="228.2" cy="141.0" r="2.10"/><circle cx="227.0" cy="143.5" r="2.10"/><circle cx="228.6" cy="144.3" r="2.10"/><circle cx="228.3" cy="146.0" r="2.85"/><circle cx="224.5" cy="143.9" r="2.10"/><circle cx="225.9" cy="146.2" r="2.10"/><circle cx="228.3" cy="147.3" r="2.10"/><circle cx="229.8" cy="149.3" r="2.10"/><circle cx="232.4" cy="151.0" r="2.10"/><circle cx="233.7" cy="153.4" r="2.10"/><circle cx="239.2" cy="138.4" r="2.35"/><circle cx="175.1" cy="180.9" r="4.05"/><circle cx="174.0" cy="180.2" r="2.35"/><circle cx="176.2" cy="181.7" r="2.35"/><circle cx="251.7" cy="182.8" r="2.77"/><circle cx="251.7" cy="182.1" r="2.44"/><circle cx="250.3" cy="182.2" r="2.48"/><circle cx="250.9" cy="176.7" r="2.66"/><circle cx="252.9" cy="176.0" r="2.83"/><circle cx="254.2" cy="184.0" r="2.47"/><circle cx="251.7" cy="181.2" r="2.69"/><circle cx="252.0" cy="183.8" r="2.35"/><circle cx="250.4" cy="176.0" r="2.35"/><circle cx="251.4" cy="176.2" r="2.35"/><circle cx="251.4" cy="177.5" r="2.35"/><circle cx="253.4" cy="176.9" r="2.35"/><circle cx="252.4" cy="178.1" r="2.35"/><circle cx="253.9" cy="178.5" r="2.35"/><circle cx="255.4" cy="178.4" r="2.35"/><circle cx="253.7" cy="180.4" r="2.67"/><circle cx="255.4" cy="180.2" r="2.67"/><circle cx="257.1" cy="180.1" r="2.67"/><circle cx="256.3" cy="180.6" r="2.67"/><circle cx="257.9" cy="180.7" r="2.67"/><circle cx="259.6" cy="180.1" r="2.67"/><circle cx="258.8" cy="180.9" r="2.67"/><circle cx="260.5" cy="180.6" r="2.67"/><circle cx="262.1" cy="181.5" r="2.67"/><circle cx="261.3" cy="181.0" r="2.67"/><circle cx="263.0" cy="181.9" r="2.67"/><circle cx="264.7" cy="181.0" r="2.67"/><circle cx="263.5" cy="182.9" r="2.49"/><circle cx="265.1" cy="182.5" r="2.49"/><circle cx="266.7" cy="182.6" r="2.49"/><circle cx="265.8" cy="184.2" r="2.35"/><circle cx="267.3" cy="183.3" r="2.35"/><circle cx="268.8" cy="183.3" r="2.35"/><circle cx="268.1" cy="185.5" r="2.35"/><circle cx="270.6" cy="185.0" r="2.35"/><circle cx="270.0" cy="185.6" r="2.35"/><circle cx="272.3" cy="186.7" r="2.35"/><circle cx="271.9" cy="187.8" r="2.35"/><circle cx="273.9" cy="186.8" r="2.35"/><circle cx="273.8" cy="188.3" r="2.35"/><circle cx="275.5" cy="187.9" r="2.35"/><circle cx="275.6" cy="189.3" r="2.35"/><circle cx="277.1" cy="189.6" r="2.35"/><circle cx="277.4" cy="190.3" r="2.35"/><circle cx="278.7" cy="191.0" r="2.35"/><circle cx="279.1" cy="191.5" r="2.35"/><circle cx="280.3" cy="191.6" r="2.35"/><circle cx="280.9" cy="193.6" r="2.35"/><circle cx="281.8" cy="193.1" r="2.35"/><circle cx="282.6" cy="194.4" r="2.35"/><circle cx="283.4" cy="194.6" r="2.35"/><circle cx="284.4" cy="195.6" r="2.35"/><circle cx="285.2" cy="195.5" r="2.35"/><circle cx="286.2" cy="196.3" r="2.35"/><circle cx="287.0" cy="197.1" r="2.35"/><circle cx="288.4" cy="198.0" r="2.75"/><circle cx="295.3" cy="203.3" r="4.29"/><circle cx="297.6" cy="203.8" r="4.29"/><circle cx="299.9" cy="203.8" r="4.29"/><circle cx="294.3" cy="205.7" r="4.35"/><circle cx="296.6" cy="204.9" r="4.35"/><circle cx="298.9" cy="204.9" r="4.35"/><circle cx="293.2" cy="206.4" r="4.41"/><circle cx="295.6" cy="206.5" r="4.41"/><circle cx="298.0" cy="207.1" r="4.41"/><circle cx="292.2" cy="208.1" r="4.47"/><circle cx="294.6" cy="208.5" r="4.47"/><circle cx="297.0" cy="208.2" r="4.47"/><circle cx="291.3" cy="210.0" r="4.35"/><circle cx="293.6" cy="210.1" r="4.35"/><circle cx="296.0" cy="210.6" r="4.35"/><circle cx="290.4" cy="212.0" r="4.23"/><circle cx="292.7" cy="211.3" r="4.23"/><circle cx="295.0" cy="211.6" r="4.23"/><circle cx="291.7" cy="213.6" r="5.10"/><circle cx="272.1" cy="212.1" r="2.35"/><circle cx="300.1" cy="232.0" r="3.35"/><circle cx="301.1" cy="232.7" r="3.35"/><circle cx="298.8" cy="235.2" r="4.65"/><circle cx="301.2" cy="235.5" r="4.65"/><circle cx="303.6" cy="234.7" r="4.65"/><circle cx="299.5" cy="236.7" r="5.19"/><circle cx="302.2" cy="237.3" r="5.19"/><circle cx="304.9" cy="237.2" r="5.19"/><circle cx="300.0" cy="238.8" r="5.35"/><circle cx="302.1" cy="239.2" r="5.35"/><circle cx="304.3" cy="238.9" r="5.35"/><circle cx="306.5" cy="239.3" r="5.35"/><circle cx="300.6" cy="240.3" r="5.35"/><circle cx="302.7" cy="240.4" r="5.35"/><circle cx="304.8" cy="241.2" r="5.35"/><circle cx="306.9" cy="240.6" r="5.35"/><circle cx="301.3" cy="242.2" r="5.35"/><circle cx="303.3" cy="242.9" r="5.35"/><circle cx="305.3" cy="242.7" r="5.35"/><circle cx="307.3" cy="242.1" r="5.35"/><circle cx="302.0" cy="244.3" r="5.35"/><circle cx="304.9" cy="244.4" r="5.35"/><circle cx="307.7" cy="243.8" r="5.35"/><circle cx="302.6" cy="246.2" r="5.35"/><circle cx="305.4" cy="245.5" r="5.35"/><circle cx="308.1" cy="245.8" r="5.35"/><circle cx="302.9" cy="247.3" r="5.30"/><circle cx="305.6" cy="247.4" r="5.30"/><circle cx="308.3" cy="248.4" r="5.30"/><circle cx="303.1" cy="249.5" r="5.23"/><circle cx="305.8" cy="250.2" r="5.23"/><circle cx="308.4" cy="249.5" r="5.23"/><circle cx="303.3" cy="251.5" r="5.15"/><circle cx="305.9" cy="251.8" r="5.15"/><circle cx="308.6" cy="251.6" r="5.15"/><circle cx="303.5" cy="252.7" r="5.08"/><circle cx="306.1" cy="253.3" r="5.08"/><circle cx="308.7" cy="253.4" r="5.08"/><circle cx="303.7" cy="254.6" r="5.01"/><circle cx="306.3" cy="254.5" r="5.01"/><circle cx="308.9" cy="255.4" r="5.01"/><circle cx="303.6" cy="256.8" r="4.83"/><circle cx="306.1" cy="256.4" r="4.83"/><circle cx="308.6" cy="256.7" r="4.83"/><circle cx="303.5" cy="258.3" r="4.65"/><circle cx="305.9" cy="259.0" r="4.65"/><circle cx="308.4" cy="258.6" r="4.65"/><circle cx="303.4" cy="259.9" r="4.47"/><circle cx="305.8" cy="260.8" r="4.47"/><circle cx="308.1" cy="259.9" r="4.47"/><circle cx="303.3" cy="261.9" r="4.29"/><circle cx="305.6" cy="261.6" r="4.29"/><circle cx="307.9" cy="262.5" r="4.29"/><circle cx="303.2" cy="263.5" r="4.11"/><circle cx="305.4" cy="264.0" r="4.11"/><circle cx="307.6" cy="263.5" r="4.11"/><circle cx="302.9" cy="265.7" r="3.97"/><circle cx="305.1" cy="266.0" r="3.97"/><circle cx="307.3" cy="265.8" r="3.97"/><circle cx="302.7" cy="267.5" r="3.82"/><circle cx="304.8" cy="267.5" r="3.82"/><circle cx="306.9" cy="267.4" r="3.82"/><circle cx="302.4" cy="269.4" r="3.68"/><circle cx="304.5" cy="268.8" r="3.68"/><circle cx="306.6" cy="269.2" r="3.68"/><circle cx="302.2" cy="270.7" r="3.53"/><circle cx="304.2" cy="271.5" r="3.53"/><circle cx="306.2" cy="271.6" r="3.53"/><circle cx="301.9" cy="272.3" r="3.39"/><circle cx="303.9" cy="272.4" r="3.39"/><circle cx="305.9" cy="273.0" r="3.39"/><circle cx="301.7" cy="274.4" r="3.35"/><circle cx="303.5" cy="273.8" r="3.35"/><circle cx="305.2" cy="274.6" r="3.35"/><circle cx="301.5" cy="276.4" r="3.35"/><circle cx="303.0" cy="275.8" r="3.35"/><circle cx="304.5" cy="275.7" r="3.35"/><circle cx="301.4" cy="277.5" r="3.35"/><circle cx="303.9" cy="278.0" r="3.35"/><circle cx="301.2" cy="278.7" r="3.35"/><circle cx="303.2" cy="278.8" r="3.35"/><circle cx="300.9" cy="280.7" r="3.35"/><circle cx="302.5" cy="281.2" r="3.35"/><circle cx="300.5" cy="283.1" r="3.35"/><circle cx="301.9" cy="282.8" r="3.35"/><circle cx="300.2" cy="285.1" r="3.35"/><circle cx="301.2" cy="284.6" r="3.35"/><circle cx="300.4" cy="286.8" r="3.52"/><circle cx="300.0" cy="288.4" r="3.18"/><circle cx="299.7" cy="290.0" r="2.85"/><circle cx="297.9" cy="297.7" r="3.60"/><circle cx="299.2" cy="294.0" r="2.10"/><circle cx="205.1" cy="393.0" r="2.75"/><circle cx="210.4" cy="392.1" r="2.75"/><circle cx="241.1" cy="395.7" r="2.75"/><circle cx="659.8" cy="374.4" r="2.85"/><circle cx="658.7" cy="383.9" r="2.85"/><circle cx="662.8" cy="402.8" r="3.85"/><circle cx="657.4" cy="409.2" r="3.60"/><circle cx="397.2" cy="56.7" r="2.35"/><circle cx="384.4" cy="82.2" r="2.14"/><circle cx="379.8" cy="84.5" r="2.30"/><circle cx="374.6" cy="84.9" r="2.08"/><circle cx="381.6" cy="164.3" r="2.35"/><circle cx="383.6" cy="164.7" r="2.35"/><circle cx="383.7" cy="166.6" r="2.67"/><circle cx="385.4" cy="165.7" r="2.67"/><circle cx="387.1" cy="166.3" r="2.67"/><circle cx="388.7" cy="167.6" r="2.85"/><circle cx="372.9" cy="188.3" r="2.95"/><circle cx="391.7" cy="272.2" r="2.45"/><circle cx="429.6" cy="150.9" r="3.10"/><circle cx="434.2" cy="150.9" r="2.10"/><circle cx="463.0" cy="149.5" r="3.60"/><circle cx="465.9" cy="150.5" r="2.35"/><circle cx="474.3" cy="139.5" r="6.70"/><circle cx="474.3" cy="139.5" r="4.60"/><circle cx="474.9" cy="140.0" r="2.60"/><circle cx="472.4" cy="141.0" r="4.35"/><circle cx="475.9" cy="144.0" r="4.35"/><circle cx="473.4" cy="146.0" r="3.85"/><circle cx="476.4" cy="150.0" r="2.85"/><circle cx="469.9" cy="149.5" r="2.85"/><circle cx="478.9" cy="145.0" r="2.35"/><circle cx="469.4" cy="144.5" r="2.85"/><circle cx="488.7" cy="153.3" r="6.05"/><circle cx="533.5" cy="154.2" r="5.35"/><circle cx="502.6" cy="166.9" r="3.85"/><circle cx="471.7" cy="176.3" r="2.35"/><circle cx="470.2" cy="175.3" r="2.35"/><circle cx="418.7" cy="175.8" r="2.95"/><circle cx="433.4" cy="177.8" r="2.85"/><circle cx="434.9" cy="178.4" r="2.85"/><circle cx="435.1" cy="179.6" r="2.85"/><circle cx="437.1" cy="179.4" r="2.85"/><circle cx="438.1" cy="181.3" r="3.85"/><circle cx="445.6" cy="192.0" r="2.65"/><circle cx="447.3" cy="190.7" r="2.65"/><circle cx="449.0" cy="189.4" r="2.65"/><circle cx="450.7" cy="188.2" r="2.65"/><circle cx="425.6" cy="201.0" r="2.85"/><circle cx="427.1" cy="201.1" r="2.85"/><circle cx="424.2" cy="203.0" r="2.85"/><circle cx="426.1" cy="203.0" r="2.85"/><circle cx="422.8" cy="205.1" r="2.85"/><circle cx="425.0" cy="205.8" r="2.85"/><circle cx="422.7" cy="207.4" r="4.10"/><circle cx="474.5" cy="187.2" r="2.67"/><circle cx="476.2" cy="187.7" r="2.67"/><circle cx="477.9" cy="188.0" r="2.67"/><circle cx="472.9" cy="189.7" r="2.37"/><circle cx="474.4" cy="189.3" r="2.37"/><circle cx="476.0" cy="188.8" r="2.37"/><circle cx="471.2" cy="190.9" r="2.07"/><circle cx="474.1" cy="191.6" r="2.07"/><circle cx="462.8" cy="218.1" r="2.85"/><circle cx="462.8" cy="200.0" r="2.45"/><circle cx="451.9" cy="211.1" r="2.85"/><circle cx="453.9" cy="211.7" r="2.85"/><circle cx="453.2" cy="212.5" r="2.85"/><circle cx="454.9" cy="212.3" r="2.85"/><circle cx="456.5" cy="212.0" r="2.85"/><circle cx="454.9" cy="213.5" r="3.27"/><circle cx="456.8" cy="213.5" r="3.27"/><circle cx="458.7" cy="213.2" r="3.27"/><circle cx="456.7" cy="214.0" r="3.75"/><circle cx="458.8" cy="213.7" r="3.75"/><circle cx="460.9" cy="213.4" r="3.75"/><circle cx="459.1" cy="214.5" r="3.27"/><circle cx="461.0" cy="214.8" r="3.27"/><circle cx="462.9" cy="214.1" r="3.27"/><circle cx="461.5" cy="215.7" r="2.85"/><circle cx="463.2" cy="215.0" r="2.85"/><circle cx="464.9" cy="215.0" r="2.85"/><circle cx="465.4" cy="216.0" r="3.85"/><circle cx="456.4" cy="218.5" r="2.85"/><circle cx="460.8" cy="225.4" r="3.10"/><circle cx="483.5" cy="232.8" r="2.50"/><circle cx="480.9" cy="242.1" r="3.10"/><circle cx="493.8" cy="244.5" r="3.00"/><circle cx="514.9" cy="297.6" r="2.25"/><circle cx="521.6" cy="306.7" r="2.95"/><circle cx="587.5" cy="108.5" r="2.10"/><circle cx="558.8" cy="118.1" r="3.35"/><circle cx="592.9" cy="129.9" r="2.15"/><circle cx="583.2" cy="134.1" r="2.15"/><circle cx="581.2" cy="142.6" r="2.15"/><circle cx="602.9" cy="140.8" r="2.65"/><circle cx="558.8" cy="172.5" r="3.35"/><circle cx="652.4" cy="104.0" r="2.60"/><circle cx="653.9" cy="103.1" r="2.60"/><circle cx="649.5" cy="106.4" r="3.21"/><circle cx="651.4" cy="107.6" r="3.21"/><circle cx="653.3" cy="106.6" r="3.21"/><circle cx="648.3" cy="108.8" r="3.12"/><circle cx="650.1" cy="109.4" r="3.12"/><circle cx="652.0" cy="109.1" r="3.12"/><circle cx="647.1" cy="112.0" r="3.03"/><circle cx="648.9" cy="111.2" r="3.03"/><circle cx="650.7" cy="112.1" r="3.03"/><circle cx="646.2" cy="113.1" r="2.73"/><circle cx="647.9" cy="113.5" r="2.73"/><circle cx="649.6" cy="113.9" r="2.73"/><circle cx="645.5" cy="115.4" r="2.60"/><circle cx="648.3" cy="115.7" r="2.60"/><circle cx="644.9" cy="117.2" r="2.60"/><circle cx="646.9" cy="116.5" r="2.60"/><circle cx="644.3" cy="120.1" r="3.10"/><circle cx="644.6" cy="120.5" r="2.65"/><circle cx="643.0" cy="121.8" r="2.60"/><circle cx="642.4" cy="123.0" r="2.54"/><circle cx="641.4" cy="124.7" r="2.49"/><circle cx="640.1" cy="126.2" r="2.43"/><circle cx="639.2" cy="128.0" r="2.38"/><circle cx="637.9" cy="129.0" r="2.33"/><circle cx="636.8" cy="130.9" r="2.27"/><circle cx="635.9" cy="132.1" r="2.22"/><circle cx="634.1" cy="133.7" r="2.17"/><circle cx="632.6" cy="134.4" r="2.11"/><circle cx="631.3" cy="135.8" r="2.06"/><circle cx="623.6" cy="134.8" r="2.35"/><circle cx="624.4" cy="137.5" r="2.35"/><circle cx="623.6" cy="139.3" r="2.85"/><circle cx="623.6" cy="140.7" r="2.85"/><circle cx="622.7" cy="143.0" r="2.85"/><circle cx="623.0" cy="144.9" r="2.85"/><circle cx="622.4" cy="146.8" r="2.85"/><circle cx="621.8" cy="148.4" r="2.85"/><circle cx="622.0" cy="150.3" r="2.85"/><circle cx="622.0" cy="151.9" r="2.85"/><circle cx="630.3" cy="185.6" r="10.05"/><circle cx="592.2" cy="184.2" r="2.35"/><circle cx="592.5" cy="186.3" r="2.10"/><circle cx="593.3" cy="186.4" r="2.10"/><circle cx="593.1" cy="188.6" r="2.10"/><circle cx="594.2" cy="187.7" r="2.10"/><circle cx="593.8" cy="189.5" r="2.10"/><circle cx="595.0" cy="190.4" r="2.10"/><circle cx="594.4" cy="191.8" r="2.10"/><circle cx="595.7" cy="191.8" r="2.10"/><circle cx="595.0" cy="194.4" r="2.10"/><circle cx="596.5" cy="193.6" r="2.10"/><circle cx="595.6" cy="196.5" r="2.10"/><circle cx="597.1" cy="196.0" r="2.10"/><circle cx="596.5" cy="198.0" r="2.10"/><circle cx="598.0" cy="199.0" r="2.10"/><circle cx="597.4" cy="201.1" r="2.10"/><circle cx="598.9" cy="200.5" r="2.10"/><circle cx="598.2" cy="203.9" r="2.10"/><circle cx="599.8" cy="203.8" r="2.10"/><circle cx="598.4" cy="206.5" r="2.10"/><circle cx="600.4" cy="206.4" r="2.10"/><circle cx="599.7" cy="209.0" r="2.85"/><circle cx="554.5" cy="203.2" r="2.57"/><circle cx="555.3" cy="204.5" r="2.47"/><circle cx="556.3" cy="205.9" r="2.42"/><circle cx="557.6" cy="207.1" r="2.28"/><circle cx="557.3" cy="208.5" r="2.22"/><circle cx="559.3" cy="209.8" r="2.84"/><circle cx="559.0" cy="211.8" r="2.50"/><circle cx="560.5" cy="212.7" r="2.34"/><circle cx="560.9" cy="213.9" r="2.24"/><circle cx="561.7" cy="215.1" r="2.59"/><circle cx="563.0" cy="215.9" r="2.79"/><circle cx="564.1" cy="216.4" r="2.44"/><circle cx="565.0" cy="217.7" r="2.17"/><circle cx="566.8" cy="219.3" r="2.41"/><circle cx="567.5" cy="219.5" r="2.82"/><circle cx="569.4" cy="220.7" r="2.27"/><circle cx="569.9" cy="221.5" r="2.28"/><circle cx="571.8" cy="221.8" r="2.17"/><circle cx="572.7" cy="222.8" r="2.38"/><circle cx="574.7" cy="223.1" r="2.43"/><circle cx="575.9" cy="223.7" r="2.66"/><circle cx="577.3" cy="223.6" r="2.46"/><circle cx="578.7" cy="224.1" r="2.32"/><circle cx="580.6" cy="223.9" r="2.31"/><circle cx="582.2" cy="223.8" r="2.43"/><circle cx="583.2" cy="224.5" r="2.73"/><circle cx="584.8" cy="224.7" r="2.15"/><circle cx="586.7" cy="224.6" r="2.40"/><circle cx="587.3" cy="224.4" r="2.22"/><circle cx="588.6" cy="224.9" r="2.36"/><circle cx="590.6" cy="224.9" r="2.20"/><circle cx="592.3" cy="224.1" r="2.71"/><circle cx="594.0" cy="224.2" r="2.37"/><circle cx="595.0" cy="224.6" r="2.84"/><circle cx="596.7" cy="223.7" r="2.43"/><circle cx="598.1" cy="223.4" r="2.70"/><circle cx="632.5" cy="217.3" r="2.94"/><circle cx="630.8" cy="218.0" r="2.44"/><circle cx="631.7" cy="220.1" r="2.20"/><circle cx="631.8" cy="216.8" r="2.45"/><circle cx="632.9" cy="217.6" r="2.83"/><circle cx="635.8" cy="222.8" r="2.11"/><circle cx="634.3" cy="224.6" r="2.84"/><circle cx="634.7" cy="226.0" r="2.84"/><circle cx="639.2" cy="216.5" r="2.61"/><circle cx="639.4" cy="219.0" r="2.51"/><circle cx="639.3" cy="218.0" r="2.30"/><circle cx="636.9" cy="220.5" r="2.10"/><circle cx="675.4" cy="275.7" r="2.62"/><circle cx="674.2" cy="278.1" r="2.29"/><circle cx="673.8" cy="272.6" r="2.36"/><circle cx="672.7" cy="273.8" r="2.44"/><circle cx="675.6" cy="277.4" r="2.59"/><circle cx="678.3" cy="275.8" r="2.46"/><circle cx="673.7" cy="274.0" r="2.11"/><circle cx="675.5" cy="275.9" r="2.41"/></g></svg><div id="zoomctl"><div class="zb">+</div><div class="zb zm">&#8722;</div></div><div id="attr"><svg viewBox="0 0 12 8" style="width:10.5px;height:7px;margin-right:3px;vertical-align:0"><rect width="12" height="4" fill="#4c7be1"/><rect y="4" width="12" height="4" fill="#ffd500"/></svg><span class="lk">Leaflet</span> <span class="sep">|</span> Data by &copy; <span class="lk">OpenStreetMap</span>, under <span class="lk">ODbL</span>.</div></div><div id="vtrack"></div><div id="vthumb"></div></div><div id="ap"></div><svg class="ic" style="left:1008.2px;top:12px;width:22.4px;height:22.4px" viewBox="0 0 22.4 22.4"><defs><linearGradient id="lgfade" gradientUnits="userSpaceOnUse" x1="0" y1="19" x2="0" y2="2"><stop offset="0" stop-color="#4f9148"/><stop offset=".55" stop-color="#7fb077"/><stop offset="1" stop-color="#d5e8d1"/></linearGradient></defs><path d="M11.510 2.305A8.900 8.900 0 1 1 5.721 18.213" fill="none" stroke="#58a64f" stroke-width="3.200"/><path d="M5.197 18.883A9.750 9.750 0 0 1 11.540 1.456" fill="none" stroke="url(#lgfade)" stroke-width="1.550" stroke-dasharray="1.600 1.600"/><path d="M6.244 17.543A8.050 8.050 0 0 1 11.481 3.155" fill="none" stroke="url(#lgfade)" stroke-width="1.550" stroke-dasharray="1.350 1.350" stroke-dashoffset="1.350"/></svg><span class="ui" style="left:1038px;top:14.2px;font-size:17.44px;line-height:22px;font-weight:bold;color:#1c1c1c">Anaconda Assistant</span><span class="tx" style="left:1216.3px;top:19.5px;font-size:11.3px;line-height:14px;color:#c6c6c6">0.3.0</span><svg class="ic" style="left:1467.90px;top:16.10px;width:19.00px;height:19.00px;fill:#5e6282;" viewBox="0 0 24 24"><path d="M19.14 12.94c.04-.3.06-.61.06-.94 0-.32-.02-.64-.07-.94l2.03-1.58a.49.49 0 0 0 .12-.61l-1.92-3.32a.488.488 0 0 0-.59-.22l-2.39.96c-.5-.38-1.03-.7-1.62-.94l-.36-2.54a.484.484 0 0 0-.48-.41h-3.84c-.24 0-.43.17-.47.41l-.36 2.54c-.59.24-1.13.57-1.62.94l-2.39-.96c-.22-.08-.47 0-.59.22L2.74 8.87c-.12.21-.08.47.12.61l2.03 1.58c-.05.3-.09.63-.09.94s.02.64.07.94l-2.03 1.58a.49.49 0 0 0-.12.61l1.92 3.32c.12.22.37.29.59.22l2.39-.96c.5.38 1.03.7 1.62.94l.36 2.54c.05.24.24.41.48.41h3.84c.24 0 .44-.17.47-.41l.36-2.54c.59-.24 1.13-.56 1.62-.94l2.39.96c.22.08.47 0 .59-.22l1.92-3.32c.12-.22.07-.47-.12-.61l-2.01-1.58zM12 15.6c-1.98 0-3.6-1.62-3.6-3.6s1.62-3.6 3.6-3.6 3.6 1.62 3.6 3.6-1.62 3.6-3.6 3.6z"/></svg><div class="hr" style="top:52.3px;background:#f0f0f0"></div><svg class="ic" style="left:1011.5px;top:67.6px;width:15px;height:12.4px" viewBox="0 0 15 12.4"><path d="M0 .9h15M0 6.200h15M0 11.500h15" stroke="#666" stroke-width="1.700" fill="none"/></svg><span class="tx" style="left:1034.6px;top:66.1px;font-size:12.2px;line-height:16px;color:#7d7d7d">History</span><span class="tx" style="left:1161.7px;top:65px;font-size:13.39px;line-height:18px;color:#222">Generate Python code</span><div id="newchat"></div><svg class="ic" style="left:1397.3px;top:65.2px;width:15px;height:15px" viewBox="0 0 15 15"><path d="M7.500 .5v14M.5 7.500h14" stroke="#fff" stroke-width="1.700" fill="none"/></svg><span class="tx" style="left:1420px;top:64.5px;font-size:12.5px;line-height:18px;color:#fff">New Chat</span><div class="hr" style="top:94.7px;background:#d9d9d9"></div><div id="aptrack"></div><div id="apthumb"></div><div style="position:absolute;left:1016px;top:95.7px;width:11px;height:2.2px;background:#e3e3e3;border-radius:0 0 2px 2px"></div><div style="position:absolute;left:1445px;top:95.7px;width:10px;height:1.8px;background:#ececec;border-radius:0 0 2px 2px"></div><div id="umsg"></div><div class="av" style="left:1014.7px;top:117.3px;width:29.4px;height:29.5px;background:#6859ea"></div><svg class="ic" style="left:1014.7px;top:117.3px;width:29.4px;height:29.5px" viewBox="0 0 29.4 29.5"><circle cx="14.600" cy="10.700" r="4.300" fill="#fff"/><path d="M6.800 23.700C6.800 19.300 10.200 16.600 14.650 16.600S22.500 19.300 22.500 23.700Z" fill="#fff"/></svg><div class="tx msg" style="left:1015px;top:160.1px;font-size:13.55px;line-height:17.7px">Use df to graph a map of volcanos. Use blue circles as markers. The size
of the circle should correspond to the elevation of the volcano.</div><svg class="ic" style="left:1014.05px;top:205.85px;width:15.50px;height:15.50px;fill:#d2d1dc;" viewBox="0 0 24 24"><path d="M18 2H6c-1.1 0-2 .9-2 2v16c0 1.1.9 2 2 2h12c1.1 0 2-.9 2-2V4c0-1.1-.9-2-2-2zM6 4h5v8l-2.5-1.5L6 12V4z"/></svg><svg class="ic" style="left:1441.50px;top:205.00px;width:17.00px;height:17.00px;fill:#d5d3e6;" viewBox="0 0 24 24"><path d="M6 19c0 1.1.9 2 2 2h8c1.1 0 2-.9 2-2V7H6v12zM19 4h-3.5l-1-1h-5l-1 1H5v2h14V4z"/></svg><div class="av" style="left:1014.8px;top:241.3px;width:29.3px;height:30.6px;background:#5fa856"></div><svg class="ic" style="left:1014.8px;top:241.3px;width:29.3px;height:30.6px" viewBox="0 0 29.3 30.6"><path d="M8.800 8.100h11.700a2.300 2.300 0 0 1 2.300 2.300v8.300a2.300 2.300 0 0 1-2.300 2.300H16.300l-4 3.800v-3.800H8.800a2.300 2.300 0 0 1-2.300-2.300v-8.300a2.300 2.300 0 0 1 2.300-2.300z" fill="#fff"/><rect x="9.200" y="11.900" width="10.900" height="5.400" rx="2.100" fill="#5fa856"/><circle cx="12.100" cy="14.600" r="1.300" fill="#e9f7e6"/><circle cx="17.200" cy="14.600" r="1.300" fill="#e9f7e6"/><path d="M3.600 14.600h2.900M22.800 14.600h2.900" stroke="#dff3db" stroke-width="1.500"/></svg><div class="tx msg" style="left:1015px;top:284.2px;font-size:13.65px;line-height:21.05px">To graph a map of volcanoes using the DataFrame `df` with blue circles
as markers, where the size of the circle corresponds to the elevation of
the volcano, we can use the `folium` package. Here's how you can do it:</div><div id="dblock"><pre class="dcode" id="code2"><span class="dk">import</span> folium

<span class="dc"># Create a map centered around the mean latitude and longitude</span>
map_volcanoes <span class="do">=</span> folium<span class="dp">.</span>Map<span class="dp">(</span>location=<span class="dp">[</span>df<span class="dp">[</span><span class="ds">'Latitude'</span><span class="dp">]</span><span class="dp">.</span>mean<span class="dp">(</span><span class="dp">)</span><span class="dp">,</span> df<span class="dp">[</span><span class="ds">'Longitude'</span><span class="dp">]</span><span class="dp">.</span>mean<span class="dp">(</span><span class="dp">)</span><span class="dp">]</span><span class="dp">,</span> zoom_start=<span class="dn">2</span><span class="dp">)</span>

<span class="dc"># Add markers for each volcano</span>
<span class="dk">for</span> index<span class="dp">,</span> row <span class="dk">in</span> df<span class="dp">.</span>iterrows<span class="dp">(</span><span class="dp">)</span><span class="dp">:</span>
    folium<span class="dp">.</span>CircleMarker<span class="dp">(</span>
        location=<span class="dp">[</span>row<span class="dp">[</span><span class="ds">'Latitude'</span><span class="dp">]</span><span class="dp">,</span> row<span class="dp">[</span><span class="ds">'Longitude'</span><span class="dp">]</span><span class="dp">]</span><span class="dp">,</span>
        radius=row<span class="dp">[</span><span class="ds">'Elevation'</span><span class="dp">]</span> <span class="do">/</span> <span class="dn">1000</span><span class="dp">,</span>  <span class="dc"># Divide by 1000 to scale down the size of the circle</span>
        color=<span class="ds">'blue'</span><span class="dp">,</span>
        fill=<span class="dk">True</span><span class="dp">,</span>
        fill_color=<span class="ds">'blue'</span>
    <span class="dp">)</span><span class="dp">.</span>add_to<span class="dp">(</span>map_volcanoes<span class="dp">)</span>

<span class="dc"># Display the map</span>
map_volcanoes</pre></div><div id="dscroll"><div></div></div><div class="btn" style="left:1014.3px;width:179px"></div><svg class="ic" style="left:1021.35px;top:724.25px;width:20.50px;height:20.50px;fill:#6557e0;" viewBox="0 0 24 24"><path d="M12 2C6.48 2 2 6.48 2 12s4.48 10 10 10 10-4.48 10-10S17.52 2 12 2zM9.5 16.5v-9l7 4.5-7 4.5z"/></svg><span class="ui" style="left:1048px;top:725.5px;font-size:13.79px;color:#6557e0">Run code in Notebook</span><div class="btn dis" style="left:1204.4px;width:176px"></div><svg class="ic" style="left:1224.05px;top:725.55px;width:17.50px;height:17.50px;fill:#868686;" viewBox="0 0 24 24"><path d="M7.5 5.6 10 7 8.6 4.5 10 2 7.5 3.4 5 2l1.4 2.5L5 7zm12 9.8L17 14l1.4 2.5L17 19l2.5-1.4L22 19l-1.4-2.5L22 14zM22 2l-2.5 1.4L17 2l1.4 2.5L17 7l2.5-1.4L22 7l-1.4-2.5zm-7.63 5.29a.996.996 0 0 0-1.41 0L1.29 18.96a.996.996 0 0 0 0 1.41l2.34 2.34c.39.39 1.02.39 1.41 0L16.7 11.05a.996.996 0 0 0 0-1.41l-2.33-2.35zm-1.03 5.49-2.12-2.12 2.44-2.44 2.12 2.12-2.44 2.44z"/></svg><span class="ui" style="left:1250.6px;top:725.5px;font-size:13.73px;color:#9b9b9b">Replace selection</span><div class="btn" style="left:1391px;width:75.4px"></div><svg class="ic" style="left:1401.5px;top:727.3px;width:14px;height:15px" viewBox="0 0 14 15"><rect x="2" y="2.600" width="10" height="11" rx="2.200" fill="#fff" stroke="#6557e0" stroke-width="1.500"/><path d="M4.500 1.300h5" stroke="#a9a1ee" stroke-width="1.200" stroke-dasharray="1 1"/></svg><span class="ui" style="left:1425px;top:725.5px;font-size:13.92px;color:#6557e0">Copy</span><div class="tx msg" style="left:1015px;top:782.8px;font-size:13.52px;line-height:21.18px">This code creates a map using the `folium` package, centered around
the mean latitude and longitude of the volcanoes. It then iterates over
each row in the DataFrame `df` and adds a circle marker for each
volcano. The radius of the circle is set to the elevation of the volcano
divided by 1000 to scale down the size. Finally, it displays the map with
the volcano markers.</div><svg class="ic" style="left:1014.05px;top:925.35px;width:15.50px;height:15.50px;fill:#dcdcdc;" viewBox="0 0 24 24"><path d="M18 2H6c-1.1 0-2 .9-2 2v16c0 1.1.9 2 2 2h12c1.1 0 2-.9 2-2V4c0-1.1-.9-2-2-2zM6 4h5v8l-2.5-1.5L6 12V4z"/></svg><svg class="ic" style="left:1419.25px;top:926.05px;width:14.50px;height:14.50px;fill:#d9d9d9;" viewBox="0 0 24 24"><path d="M1 21h4V9H1v12zm22-11c0-1.1-.9-2-2-2h-6.31l.95-4.57.03-.32c0-.41-.17-.79-.44-1.06L14.17 1 7.59 7.59C7.22 7.95 7 8.45 7 9v10c0 1.1.9 2 2 2h9c.83 0 1.54-.5 1.84-1.22l3.02-7.05c.09-.23.14-.47.14-.73v-2z"/></svg><svg class="ic" style="left:1443.15px;top:926.05px;width:14.50px;height:14.50px;fill:#d9d9d9;" viewBox="0 0 24 24"><path d="M15 3H6c-.83 0-1.54.5-1.84 1.22l-3.02 7.05c-.09.23-.14.47-.14.73v2c0 1.1.9 2 2 2h6.31l-.95 4.57-.03.32c0 .41.17.79.44 1.06L9.83 23l6.59-6.59c.36-.36.58-.86.58-1.41V5c0-1.1-.9-2-2-2zm4 0v12h4V3h-4z"/></svg><svg class="ic" style="left:1106.30px;top:966.00px;width:20.00px;height:20.00px;fill:#cfcfcf;" viewBox="0 0 24 24"><path d="M15.41 7.41 14 6l-6 6 6 6 1.41-1.41L10.83 12z"/></svg><span class="tx" style="left:1131.5px;top:967.3px;font-size:12.47px;line-height:17px;color:#c4c4c4">Export and run this chat in your Notebook</span><div id="apfade"></div><div id="apbottom"></div><div id="inputbox"></div><span class="tx" style="left:1034.4px;top:1031px;font-size:12.51px;line-height:17px;color:#5a5a5a">Reply to this chat...</span><div id="send"></div><svg class="ic" style="left:1444.75px;top:1031.35px;width:14.50px;height:14.50px;fill:#fff;" viewBox="0 0 512 512"><path d="M476 3.2L12.5 270.6c-18.1 10.4-15.8 35.6 2.2 43.2L121 358.4l287.3-253.2c5.5-4.9 13.3 2.6 8.6 8.3L176 407v80.5c0 23.6 28.5 32.9 42.5 15.8L282 426l124.6 52.2c14.2 6 30.4-2.9 33-18.2l72-432C515 7.8 493.3-6.8 476 3.2z"/></svg><div id="prog"><div></div></div><span class="tx" style="left:1014.2px;top:1092.6px;font-size:11.5px;line-height:15px;color:#a0a0a0">Chat</span><span class="tx" style="left:1043.3px;top:1092.4px;font-size:12.4px;line-height:15px;color:#8a8a8a;font-weight:bold">18%</span><span class="tx" style="left:1077px;top:1092.6px;font-size:11.5px;line-height:15px;color:#a0a0a0">full</span><svg class="ic" style="left:1106.20px;top:1091.60px;width:16.00px;height:16.00px;fill:#5546d6;" viewBox="0 0 24 24"><path d="M17.65 6.35A7.958 7.958 0 0 0 12 4c-4.42 0-7.99 3.58-7.99 8s3.57 8 7.99 8c3.73 0 6.84-2.55 7.73-6h-2.08A5.99 5.99 0 0 1 12 18c-3.31 0-6-2.69-6-6s2.69-6 6-6c1.66 0 3.14.69 4.22 1.78L13 11h7V4l-2.35 2.35z"/></svg><span class="tx" style="left:1124.4px;top:1092.6px;font-size:11.46px;line-height:15px;color:#5546d6">Restart</span><svg class="ic" style="left:1376.10px;top:1082.90px;width:17.00px;height:17.00px;fill:#6a5be2;transform:rotate(45deg)" viewBox="0 0 24 24"><path d="M16.5 6v11.5c0 2.21-1.79 4-4 4s-4-1.79-4-4V5a2.5 2.5 0 0 1 5 0v10.5c0 .55-.45 1-1 1s-1-.45-1-1V6H10v9.5a2.5 2.5 0 0 0 5 0V5c0-2.21-1.79-4-4-4S7 2.79 7 5v12.5c0 3.04 2.46 5.5 5.5 5.5s5.5-2.46 5.5-5.5V6h-1.5z"/></svg><span class="ui" style="left:1397.7px;top:1083.1px;font-size:13.74px;color:#6a5be2">Attach to chat</span><div id="rsb"><div id="rsbact"></div></div><svg class="ic" style="left:1516.30px;top:21.20px;width:15.80px;height:15.80px;fill:#616161;" viewBox="0 0 24 24"><path d="M19.14 12.94c.04-.3.06-.61.06-.94 0-.32-.02-.64-.07-.94l2.03-1.58a.49.49 0 0 0 .12-.61l-1.92-3.32a.488.488 0 0 0-.59-.22l-2.39.96c-.5-.38-1.03-.7-1.62-.94l-.36-2.54a.484.484 0 0 0-.48-.41h-3.84c-.24 0-.43.17-.47.41l-.36 2.54c-.59.24-1.13.57-1.62.94l-2.39-.96c-.22-.08-.47 0-.59.22L2.74 8.87c-.12.21-.08.47.12.61l2.03 1.58c-.05.3-.09.63-.09.94s.02.64.07.94l-2.03 1.58a.49.49 0 0 0-.12.61l1.92 3.32c.12.22.37.29.59.22l2.39-.96c.5.38 1.03.7 1.62.94l.36 2.54c.05.24.24.41.48.41h3.84c.24 0 .44-.17.47-.41l.36-2.54c.59-.24 1.13-.56 1.62-.94l2.39.96c.22.08.47 0 .59-.22l1.92-3.32c.12-.22.07-.47-.12-.61l-2.01-1.58zM12 15.6c-1.98 0-3.6-1.62-3.6-3.6s1.62-3.6 3.6-3.6 3.6 1.62 3.6 3.6-1.62 3.6-3.6 3.6z"/></svg><svg class="ic" style="left:1510.95px;top:15.65px;width:10.50px;height:10.50px;fill:#616161;" viewBox="0 0 24 24"><path d="M19.14 12.94c.04-.3.06-.61.06-.94 0-.32-.02-.64-.07-.94l2.03-1.58a.49.49 0 0 0 .12-.61l-1.92-3.32a.488.488 0 0 0-.59-.22l-2.39.96c-.5-.38-1.03-.7-1.62-.94l-.36-2.54a.484.484 0 0 0-.48-.41h-3.84c-.24 0-.43.17-.47.41l-.36 2.54c-.59.24-1.13.57-1.62.94l-2.39-.96c-.22-.08-.47 0-.59.22L2.74 8.87c-.12.21-.08.47.12.61l2.03 1.58c-.05.3-.09.63-.09.94s.02.64.07.94l-2.03 1.58a.49.49 0 0 0-.12.61l1.92 3.32c.12.22.37.29.59.22l2.39-.96c.5.38 1.03.7 1.62.94l.36 2.54c.05.24.24.41.48.41h3.84c.24 0 .44-.17.47-.41l.36-2.54c.59-.24 1.13-.56 1.62-.94l2.39.96c.22.08.47 0 .59-.22l1.92-3.32c.12-.22.07-.47-.12-.61l-2.01-1.58zM12 15.6c-1.98 0-3.6-1.62-3.6-3.6s1.62-3.6 3.6-3.6 3.6 1.62 3.6 3.6-1.62 3.6-3.6 3.6z"/></svg><svg class="ic" style="left:1512.20px;top:73.90px;width:18.00px;height:18.00px;fill:#616161;" viewBox="0 0 24 24"><path d="M20 8h-2.81a5.985 5.985 0 0 0-1.82-1.96L17 4.41 15.59 3l-2.17 2.17C12.96 5.06 12.49 5 12 5c-.49 0-.96.06-1.41.17L8.41 3 7 4.41l1.62 1.63C7.88 6.55 7.26 7.22 6.81 8H4v2h2.09c-.05.33-.09.66-.09 1v1H4v2h2v1c0 .34.04.67.09 1H4v2h2.81c1.04 1.79 2.97 3 5.19 3s4.15-1.21 5.19-3H20v-2h-2.09c.05-.33.09-.66.09-1v-1h2v-2h-2v-1c0-.34-.04-.67-.09-1H20V8zm-6 8h-4v-2h4v2zm0-4h-4v-2h4v2z"/></svg><svg class="ic" style="left:1511.25px;top:129.25px;width:19.50px;height:19.50px;fill:#4aa548;" viewBox="0 0 24 24"><path d="m19 9 1.25-2.75L23 5l-2.75-1.25L19 1l-1.25 2.75L15 5l2.75 1.25L19 9zm-7.5.5L9 4 6.5 9.5 1 12l5.5 2.5L9 20l2.5-5.5L17 12l-5.5-2.5zM19 15l-1.25 2.75L15 19l2.75 1.25L19 23l1.25-2.75L23 19l-2.75-1.25L19 15z"/></svg></body></html>
